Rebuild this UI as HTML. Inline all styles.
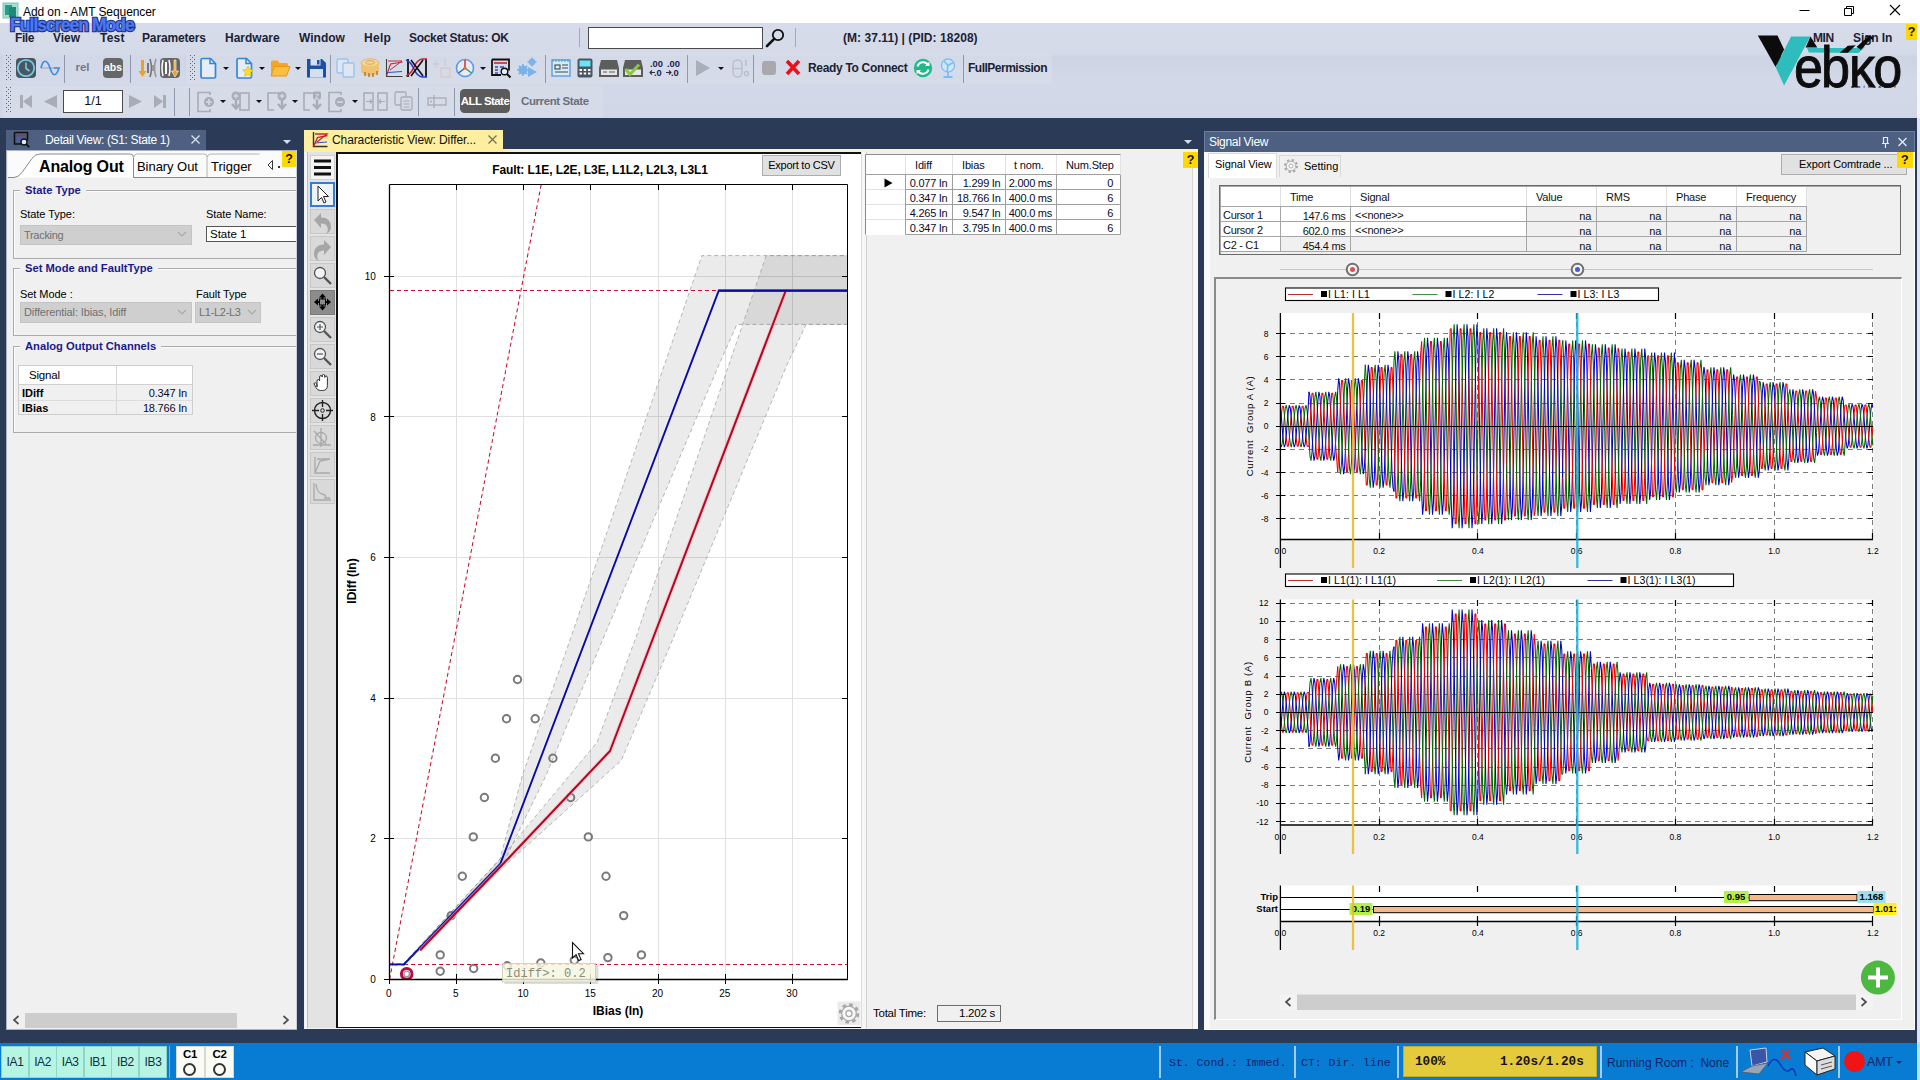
<!DOCTYPE html>
<html lang="en"><head><meta charset="utf-8"><title>Add on - AMT Sequencer</title>
<style>
*{box-sizing:border-box;margin:0;padding:0}
html,body{width:1920px;height:1080px;overflow:hidden;background:#2a3a57;font-family:"Liberation Sans",sans-serif;font-size:11px;color:#000}
.a{position:absolute}
.t{position:absolute;white-space:pre;line-height:1}
.b{font-weight:bold}
.mn{font:bold 12px "Liberation Sans",sans-serif;color:#1b2233;top:31px}
.sep{position:absolute;width:1px;background:#8e99ae}
.grip{position:absolute;width:4px;background-image:linear-gradient(90deg,#8792a8 1px,transparent 1px),linear-gradient(#d4dae8 1px,transparent 1px);background-size:2px 2px,2px 2px;background-blend-mode:normal}
.dd{position:absolute;width:0;height:0;border-left:3px solid transparent;border-right:3px solid transparent;border-top:3px solid #111}
.combo{position:absolute;background:#cfcfcf;border:1px solid #c4c4c4;color:#707070;font-size:11px;line-height:18px;padding-left:3px;white-space:pre}
.grp{position:absolute;border:1px solid #ababab;border-radius:1px;box-shadow:inset 1px 1px 0 #fbfbfb}
.grpt{position:absolute;background:#f0f0f0;color:#1a1a8c;font:bold 11.2px "Liberation Sans",sans-serif;padding:0 5px;white-space:pre;line-height:12px}
.q{position:absolute;background:#ffd800;color:#111;font:bold 12.5px "Liberation Sans",sans-serif;text-align:center;line-height:16px}
.vb{position:absolute;left:310px;width:25px;height:25px;background:#d9d9d9;border:1px solid #c8c8c8}
.cell{position:absolute;font-size:11px;white-space:pre;line-height:14px;color:#0a0a2a}
.sb{position:absolute;top:1046px;height:32px;width:27px;background:#b6f5e4;border:1px solid #8fd6c4;font:12px "Liberation Sans",sans-serif;text-align:center;line-height:31px;color:#10303a}
.st{position:absolute;top:1057px;font:11.5px "Liberation Mono",monospace;color:#14246a;white-space:pre;line-height:12px}
</style></head><body>

<div class="a" style="left:0;top:0;width:1920px;height:23px;background:#fff"></div>
<svg class="a" style="left:2px;top:2px" width="18" height="18" viewBox="0 0 18 18"><rect x="1" y="1" width="15" height="15" fill="#9edfcf" stroke="#7fc6b6"/><rect x="3" y="3" width="7" height="10" fill="#2a9d8a"/><rect x="7" y="5" width="7" height="10" fill="#1f8a78"/></svg>
<div class="t" style="left:23px;top:6px;font-size:12px;letter-spacing:-0.08px;color:#000">Add on - AMT Sequencer</div>
<svg class="a" style="left:1790px;top:0" width="130" height="23" viewBox="0 0 130 23"><path d="M9.5 10.5h10" stroke="#000" stroke-width="1" fill="none"/><path d="M54.5 8.5h7v7h-7zM56.5 8.5v-2h7v7h-2" stroke="#000" stroke-width="1" fill="none"/><path d="M100 5l10 10M110 5l-10 10" stroke="#000" stroke-width="1.1" fill="none"/></svg>
<div class="a" style="left:0;top:23px;width:1917px;height:95px;background:linear-gradient(#d7dcea 0,#d5dae9 30px,#ccd3e3 34px,#d3d9e8 60px,#d0d6e6 95px)"></div>
<div class="a" style="left:3px;top:53px;width:181px;height:31px;background:#d6dbe9;opacity:.55"></div>
<div class="a" style="left:186px;top:53px;width:866px;height:31px;background:#d8ddea;opacity:.6"></div>
<div class="a" style="left:3px;top:86px;width:600px;height:31px;background:#d8ddea;opacity:.6"></div>
<div class="t mn" style="left:15px;letter-spacing:-0.4px">File</div>
<div class="t mn" style="left:53px;letter-spacing:0px">View</div>
<div class="t mn" style="left:100px;letter-spacing:0.2px">Test</div>
<div class="t mn" style="left:142px;letter-spacing:-0.15px">Parameters</div>
<div class="t mn" style="left:225px;letter-spacing:0px">Hardware</div>
<div class="t mn" style="left:299px;letter-spacing:0px">Window</div>
<div class="t mn" style="left:364px;letter-spacing:0.3px">Help</div>
<div class="t mn" style="left:409px;letter-spacing:-0.3px">Socket Status: OK</div>
<div class="t" style="left:10px;top:14.5px;font:bold 17.5px 'Liberation Sans',sans-serif;letter-spacing:-0.95px;color:#3f63e8;-webkit-text-stroke:2.5px #20307a">Fullscreen Mode</div>
<div class="t" style="left:10px;top:14.5px;font:bold 17.5px 'Liberation Sans',sans-serif;letter-spacing:-0.95px;color:#4c78f2;-webkit-text-stroke:0.3px #4c78f2">Fullscreen Mode</div>
<div class="a" style="left:579px;top:28px;width:1px;height:19px;background:#c9a56a"></div>
<div class="a" style="left:588px;top:27px;width:175px;height:22px;background:#fff;border:1px solid #4a4a4a"></div>
<svg class="a" style="left:765px;top:27px" width="22" height="22" viewBox="0 0 22 22"><circle cx="13" cy="8" r="5.2" fill="none" stroke="#111" stroke-width="1.8"/><path d="M9.2 11.8L2 19" stroke="#111" stroke-width="2.6" stroke-linecap="round"/></svg>
<div class="a" style="left:795px;top:28px;width:1px;height:19px;background:#c9a56a"></div>
<div class="t mn" style="left:843px;letter-spacing:0.05px">(M: 37.11) | (PID: 18208)</div>
<div class="q" style="left:1906px;top:24px;width:11px;height:16px">?</div>
<div class="sep" style="left:64px;top:55px;height:28px"></div>
<div class="sep" style="left:130px;top:55px;height:28px"></div>
<div class="sep" style="left:330px;top:55px;height:28px"></div>
<div class="sep" style="left:545px;top:55px;height:28px"></div>
<div class="sep" style="left:687px;top:55px;height:28px"></div>
<div class="sep" style="left:753px;top:55px;height:28px"></div>
<div class="sep" style="left:963px;top:55px;height:28px"></div>
<div class="sep" style="left:174px;top:88px;height:28px"></div>
<div class="sep" style="left:189px;top:88px;height:28px"></div>
<div class="sep" style="left:418px;top:88px;height:28px"></div>
<div class="sep" style="left:454px;top:88px;height:28px"></div>
<div class="dd" style="left:223px;top:67px"></div>
<div class="dd" style="left:259px;top:67px"></div>
<div class="dd" style="left:295px;top:67px"></div>
<div class="dd" style="left:480px;top:67px"></div>
<div class="dd" style="left:718px;top:67px"></div>
<div class="dd" style="left:220px;top:100px"></div>
<div class="dd" style="left:256px;top:100px"></div>
<div class="dd" style="left:292px;top:100px"></div>
<div class="dd" style="left:352px;top:100px"></div>
<svg class="a" style="left:0;top:53px" width="1060" height="65" viewBox="0 53 1060 65" font-family="Liberation Sans, sans-serif">
<defs><pattern id="gp" x="6" y="55" width="4" height="4" patternUnits="userSpaceOnUse"><rect x="0" y="0" width="1" height="1" fill="#5e687c"/><rect x="2" y="2" width="1" height="1" fill="#5e687c"/></pattern></defs>
<rect x="6" y="55" width="5.2" height="26" fill="url(#gp)"/><rect x="190" y="55" width="5.2" height="26" fill="url(#gp)"/><rect x="6" y="87" width="5.2" height="26" fill="url(#gp)"/>
<rect x="16" y="58" width="20" height="20" rx="4" fill="#4a565e"/><circle cx="26" cy="68" r="8.2" fill="none" stroke="#74c8ea" stroke-width="1.8"/><path d="M26 62.5v6l3.5 2.5" stroke="#74c8ea" stroke-width="1.6" fill="none"/>
<path d="M41 68h18" stroke="#9aa3b4" stroke-width="1"/><path d="M41 68c2-9 6-9 9 0s6 9 9 0h-5" fill="none" stroke="#3d8fe2" stroke-width="1.7"/>
<text x="75.5" y="71" font-size="11.5" font-weight="bold" fill="#767b85">rel</text>
<rect x="103" y="58" width="20" height="20" rx="4" fill="#676767"/><text x="113" y="71" font-size="10.5" font-weight="bold" fill="#fff" text-anchor="middle">abs</text>
<path d="M141 60v11h-2.5l4 6 4-6H144V60z" fill="#f0a020"/><path d="M150 59q3 9 0 18" fill="none" stroke="#777" stroke-width="1.6"/><path d="M156 59q-3 9 0 18" fill="none" stroke="#999" stroke-width="1.6"/><rect x="147" y="63" width="2" height="10" fill="#777"/><rect x="152" y="65" width="2" height="6" fill="#999"/>
<rect x="160" y="58" width="20" height="20" rx="4" fill="#676767"/><path d="M163 60q-2 8 0 16M169 60q2 8 0 16" stroke="#fff" stroke-width="1.5" fill="none"/><rect x="165" y="62" width="2" height="12" fill="#fff"/><path d="M174 60v11h-2.5l3.5 6 3.500-6H176V60z" fill="#f0a020" stroke="#fff" stroke-width=".6"/>
<path d="M201 60q0-1.500 1.500-1.500h8l5 5v13q0 1.500-1.500 1.500h-11.500q-1.500 0-1.500-1.500z" fill="#e6edf8" stroke="#2f86e0" stroke-width="1.700"/><path d="M210 58.500v5h5" fill="none" stroke="#2f86e0" stroke-width="1.500"/>
<path d="M237 60q0-1.500 1.500-1.500h8l5 5v13q0 1.500-1.500 1.500h-11.500q-1.500 0-1.500-1.500z" fill="#e6edf8" stroke="#2f86e0" stroke-width="1.700"/><path d="M246 58.500v5h5" fill="none" stroke="#2f86e0" stroke-width="1.500"/><path d="M248 66l1.600 3.400 3.700.5-2.700 2.600.7 3.700-3.300-1.800-3.300 1.800.7-3.700-2.700-2.600 3.700-.5z" fill="#ffe020" stroke="#e0b000" stroke-width=".6"/>
<path d="M271 62q0-1.500 1.500-1.500h5l2 2.500h7q1.500 0 1.500 1.500v2h-13l-4 9z" fill="#f6a623"/><path d="M271 76l3.500-9.500h15.500l-3.500 9.500z" fill="#fbbf3f" stroke="#e8951a" stroke-width="1"/>
<path d="M307 59h15l4 4v14.500h-19z" fill="#1d4fa4"/><rect x="310.500" y="59" width="10" height="6.500" fill="#d4e0f2"/><rect x="317" y="60" width="2.500" height="4.500" fill="#1d4fa4"/><rect x="310" y="69" width="13" height="8.500" fill="#d4e0f2"/>
<rect x="337" y="59" width="11" height="14" rx="1.500" fill="#dfe6f2" stroke="#9cc4ee" stroke-width="1.400"/><rect x="343" y="63" width="11" height="14" rx="1.500" fill="#dfe6f2" stroke="#9cc4ee" stroke-width="1.400"/>
<ellipse cx="370" cy="63" rx="9" ry="4.200" fill="#f3d69a" stroke="#e2b96a"/><path d="M361 63v9q9 8 18 0v-9q-9 7-18 0z" fill="#f0c271"/><ellipse cx="370" cy="62.500" rx="4.500" ry="1.800" fill="none" stroke="#d9a84f" stroke-width="1"/><path d="M365 72v4M369 73v4M373 73v4M377 71v4" stroke="#9a6a20" stroke-width="1.200"/>
<path d="M386.500 59v17.500h16" fill="none" stroke="#404040" stroke-width="1.100"/><path d="M386.500 76l4-12 12-2" fill="none" stroke="#d02030" stroke-width="1.100"/><path d="M388 61h14l-12 9" fill="none" stroke="#c03040" stroke-width="1"/><path d="M388 72.500l14-1" stroke="#3050d0" stroke-width="1.100"/>
<path d="M408 59v18M426 59v18" stroke="#111" stroke-width="1.800"/><path d="M406 76q5-2 8-9t8-8l5 0" fill="none" stroke="#d02030" stroke-width="1.600"/><path d="M406 60q5 2 8 9t8 8l5 0" fill="none" stroke="#2040d0" stroke-width="1.600"/><path d="M411 60q6 8 6 8t6 8M423 60q-6 8-6 8t-6 8" stroke="#111" stroke-width="1.600" fill="none"/>
<g opacity=".45"><rect x="441" y="68" width="9" height="9" fill="none" stroke="#e8b0a0" stroke-width="1.400"/><path d="M436 60v8M433 64h6M445 59v7" stroke="#b8bfd0" stroke-width="1.300"/></g>
<circle cx="465" cy="68" r="8.500" fill="#e6ecf7" stroke="#5a9ae6" stroke-width="1.600"/><path d="M465 68v-8" stroke="#d03030" stroke-width="1.500"/><path d="M465 68l-6.500 5" stroke="#3060d0" stroke-width="1.500"/><path d="M465 68l6.500 5" stroke="#30a060" stroke-width="1.500"/><circle cx="465" cy="68" r="1.600" fill="#e07020"/>
<path d="M492 59.500h17v11M492 59.500v15.500h9" fill="none" stroke="#111" stroke-width="1.800"/><path d="M494 63h13" stroke="#d02030" stroke-width="1.600"/><path d="M495 67h3M495 70h3M495 73h3M500 67h4" stroke="#3050c0" stroke-width="1.300"/><circle cx="504.500" cy="71.500" r="3.300" fill="#e8eef8" stroke="#111" stroke-width="1.400"/><path d="M507 74l3.500 3.500" stroke="#111" stroke-width="2"/>
<g fill="#7ab2ea"><circle cx="523" cy="70" r="4.500"/><circle cx="532" cy="62" r="3.300"/><path d="M528 67l9 5-9 5z"/></g><circle cx="523" cy="70" r="1.800" fill="#d4dae8"/><circle cx="532" cy="62" r="1.300" fill="#d4dae8"/><g stroke="#7ab2ea" stroke-width="1.600"><path d="M523 64v12M517 70h12M518.800 65.800l8.400 8.400M527.200 65.800l-8.400 8.400M532 57.500v9M527.500 62h9"/></g>
<rect x="552" y="60" width="18" height="16" fill="#d6ecfb" stroke="#4e9ae0" stroke-width="1.300"/><path d="M553 59v3M556 59v3M559 59v3M562 59v3M565 59v3M568 59v3" stroke="#4e9ae0" stroke-width="1"/><rect x="555" y="65" width="5" height="4" fill="none" stroke="#444" stroke-width="1.100"/><path d="M562 65h6M562 68h6M555 72h13" stroke="#444" stroke-width="1.200"/>
<rect x="577.500" y="58.500" width="15" height="19" rx="2" fill="#4d5560"/><rect x="579.500" y="60.500" width="11" height="6" fill="#66e6f6"/><g fill="#fff"><rect x="579.500" y="69" width="2.500" height="2"/><rect x="583.700" y="69" width="2.500" height="2"/><rect x="588" y="69" width="2.500" height="2"/><rect x="579.500" y="72.500" width="2.500" height="2"/><rect x="583.700" y="72.500" width="2.500" height="2"/><rect x="588" y="72.500" width="2.500" height="2"/></g>
<path d="M601 60h16l2 8v9h-20v-9z" fill="#5d5d5d"/><rect x="601" y="69.500" width="16" height="5.500" fill="#e6e6e6"/><path d="M603 72h4M609 72h6" stroke="#5d5d5d" stroke-width="1.200"/>
<path d="M625 60h16l2 8v9h-20v-9z" fill="#5d5d5d"/><rect x="625" y="69.500" width="16" height="5.500" fill="#e6e6e6"/><path d="M625.500 69l4.500 5.500 9-10" fill="none" stroke="#8cc63f" stroke-width="3"/>
<text x="650" y="67" font-size="9.300" font-weight="bold" fill="#1b2255">.00</text><text x="667" y="67" font-size="9.300" font-weight="bold" fill="#1b2255">.00</text><text x="654" y="76" font-size="9.300" font-weight="bold" fill="#1b2255">.0</text><text x="671" y="76" font-size="9.300" font-weight="bold" fill="#1b2255">.0</text><path d="M655 72.500h-5m2-2l-2 2 2 2" stroke="#2e3340" stroke-width="1.100" fill="none"/><path d="M666 72.500h5m-2-2l2 2-2 2" stroke="#2e3340" stroke-width="1.100" fill="none"/>
<path d="M696 60l14 8-14 8z" fill="#a9afbb"/>
<g opacity=".55" fill="none" stroke="#a4aab6" stroke-width="1.400"><rect x="733" y="60" width="9" height="17" rx="4.500"/><path d="M733 68.500h9"/><path d="M746 60v6M745 61l1-1"/><circle cx="746.500" cy="73.500" r="2"/></g>
<rect x="762" y="61" width="14" height="14" rx="3" fill="#a9a9ad"/>
<path d="M787 61l12 13M799 61l-12 13" stroke="#e8121a" stroke-width="3.600"/>
<text x="808" y="72" font-size="12" font-weight="bold" fill="#1b2233" letter-spacing="-0.32">Ready To Connect</text>
<circle cx="923" cy="68" r="9.200" fill="#21b98a"/><path d="M917.500 66.500a5.800 5.800 0 0 1 10.500-1.500" fill="none" stroke="#fff" stroke-width="2"/><path d="M929.500 61.500v4.500h-4.500z" fill="#fff"/><path d="M928.500 69.500a5.800 5.800 0 0 1-10.500 1.500" fill="none" stroke="#fff" stroke-width="2"/><path d="M916.500 74.500v-4.500h4.500z" fill="#fff"/>
<circle cx="948" cy="65.500" r="6.500" fill="#cfe6fb" stroke="#7dbdf2" stroke-width="1.300"/><path d="M948 65.500l-4-4.500M948 65.500l5-3M948 65.500l-1 6" stroke="#7dbdf2" stroke-width="1.600"/><path d="M948 72v4M943.500 77h9" stroke="#7dbdf2" stroke-width="1.800"/>
<text x="968" y="72" font-size="12" font-weight="bold" fill="#1b2233" letter-spacing="-0.5">FullPermission</text>
<g fill="#a7acb6"><rect x="20" y="95" width="3" height="13"/><path d="M32 95v13l-9-6.500z"/><path d="M57 95v13l-13-6.500z"/><path d="M129 95v13l13-6.500z"/><path d="M154 95v13l9-6.500z"/><rect x="163" y="95" width="3" height="13"/></g>
<rect x="63.500" y="90.500" width="59" height="22" fill="#fff" stroke="#4a4a4a"/><text x="93" y="105" font-size="12.500" text-anchor="middle" fill="#111">1/1</text>
<path d="M210 95v-2.500h-12v19h12v-2.500" fill="none" stroke="#a7acb6" stroke-width="1.600"/><circle cx="209" cy="102" r="5" fill="#a7acb6"/><path d="M206 102h6M209 99v6" stroke="#d4dae8" stroke-width="1.600"/>
<rect x="240" y="93" width="9" height="17" fill="none" stroke="#a7acb6" stroke-width="1.600"/><circle cx="236" cy="96" r="4.500" fill="#a7acb6"/><path d="M233.500 96h5M236 93.500v5" stroke="#d4dae8" stroke-width="1.400"/><path d="M236 100v7M232 104l4 4.500 4-4.500" stroke="#a7acb6" stroke-width="2.400" fill="none"/>
<path d="M279 93h-11v17h6" fill="none" stroke="#a7acb6" stroke-width="1.600"/><circle cx="282" cy="96" r="4.500" fill="#a7acb6"/><path d="M279.500 96h5M282 93.500v5" stroke="#d4dae8" stroke-width="1.400"/><path d="M282 100v7M278 104l4 4.500 4-4.500" stroke="#a7acb6" stroke-width="2.400" fill="none"/>
<path d="M314 93h-10v17h6" fill="none" stroke="#a7acb6" stroke-width="1.600"/><rect x="313" y="91.500" width="8" height="8" rx="2" fill="#a7acb6"/><text x="317" y="98.500" font-size="7" font-weight="bold" fill="#d4dae8" text-anchor="middle">Z</text><path d="M317 100v7M313 104l4 4.500 4-4.500" stroke="#a7acb6" stroke-width="2.400" fill="none"/>
<path d="M341 95v-2.500h-12v19h12v-2.500" fill="none" stroke="#a7acb6" stroke-width="1.600"/><circle cx="340" cy="102" r="5" fill="#a7acb6"/><path d="M337 102h6" stroke="#d4dae8" stroke-width="1.600"/>
<rect x="364" y="93" width="9" height="17" fill="none" stroke="#a7acb6" stroke-width="1.500"/><rect x="378" y="93" width="9" height="17" fill="none" stroke="#a7acb6" stroke-width="1.500"/><path d="M366 101.500h6m-2-2l2 2-2 2M385 101.500h-6m2-2l-2 2 2 2" stroke="#a7acb6" stroke-width="1.200" fill="none"/>
<rect x="395" y="92" width="11" height="13" rx="1.500" fill="none" stroke="#a7acb6" stroke-width="1.300"/><rect x="401" y="97" width="11" height="13" rx="1.500" fill="#d4dae8" stroke="#a7acb6" stroke-width="1.300"/><path d="M403.500 101h6M403.500 104h6M403.500 107h6" stroke="#a7acb6" stroke-width="1"/>
<rect x="428" y="98" width="18" height="7" fill="none" stroke="#a7acb6" stroke-width="1.300"/><path d="M434 95v13" stroke="#a7acb6" stroke-width="1.300"/><path d="M430 101.500h2" stroke="#a7acb6" stroke-width="1.500"/>
<rect x="460" y="89" width="50" height="24" rx="4.500" fill="#5b5b5b"/><text x="485" y="105" font-size="11.500" font-weight="bold" fill="#fff" text-anchor="middle" letter-spacing="-0.55">ALL State</text>
<text x="521" y="105" font-size="11.500" font-weight="bold" fill="#6a6f7a" letter-spacing="-0.4">Current State</text>
</svg>
<div class="t mn" style="left:1813px;letter-spacing:-0.4px">MIN</div>
<div class="t mn" style="left:1853px;letter-spacing:-0.1px">Sign In</div>
<svg class="a" style="left:1740px;top:23px" width="177" height="95" viewBox="1740 23 177 95" font-family="Liberation Sans, sans-serif">
<defs><clipPath id="kc"><rect x="1840" y="56" width="40" height="40"/></clipPath></defs>
<text x="1766" y="75" font-size="55" font-weight="bold" fill="#0c0c0c">V</text>
<polygon points="1757.8,35.5 1777.5,35.5 1784.1,49.5 1775.6,66.9" fill="#0c0c0c"/>
<polygon points="1791.1,36.4 1810.3,36.4 1784.1,85.6 1775.6,66.9" fill="#2fbcbc"/>
<polygon points="1810.5,36.4 1817.3,47.4 1805.6,47.4" fill="#0c0c0c"/>
<polygon points="1807.0,48.1 1856.2,48.1 1860.9,43.4 1864.7,47.2 1858.6,53.0 1808.9,52.6" fill="#2fbcbc"/>
<polygon points="1839.8,52.8 1847.8,45.8 1855.8,45.3 1847.8,52.8" fill="#0c0c0c"/>
<polygon points="1856.7,46.7 1867.5,36.9 1864.7,35.5 1873.1,36.4 1872.7,40.2 1870.8,38.7 1860.9,50.0" fill="#0c0c0c"/>
<g transform="translate(1794,86.600) scale(0.9,1)" font-size="58" fill="#0d0d0d" stroke="#0d0d0d" stroke-width="0.900">
<text x="0" y="0">e</text><text x="30" y="0">b</text><text x="88" y="0">o</text>
</g>
<g clip-path="url(#kc)"><text transform="translate(1849,86.600) scale(0.9,1)" font-size="58" fill="#0d0d0d" stroke="#0d0d0d" stroke-width="0.900">k</text></g>
<text x="1851" y="88" font-size="4.200" font-weight="bold" fill="#0d0d0d" textLength="45" lengthAdjust="spacing">amirkabir</text>
</svg>
<div class="a" style="left:6px;top:130px;width:200px;height:20px;background:#4d6082"></div>
<svg class="a" style="left:13px;top:131px" width="18" height="18" viewBox="0 0 18 18"><path d="M1.500 1.500h13v8M1.500 1.500v11.500h7" fill="none" stroke="#111" stroke-width="1.600"/><path d="M3 4.500h10" stroke="#d02030" stroke-width="1.300"/><path d="M4 7.500h3M4 10h3M8.500 7.500h3" stroke="#4060d0" stroke-width="1.100"/><circle cx="11" cy="11" r="3" fill="#dfe8f5" stroke="#111" stroke-width="1.300"/><path d="M13.200 13.200l3 3" stroke="#111" stroke-width="1.800"/></svg>
<div class="t" style="left:45px;top:134px;font-size:12px;color:#fff;letter-spacing:-0.35px">Detail View: (S1: State 1)</div>
<svg class="a" style="left:190px;top:134px" width="11" height="11" viewBox="0 0 11 11"><path d="M1.500 1.500l8 8M9.500 1.500l-8 8" stroke="#d5dcec" stroke-width="1.400"/></svg>
<div class="a" style="left:283px;top:140px;width:0;height:0;border-left:4px solid transparent;border-right:4px solid transparent;border-top:4px solid #d5dcec"></div>
<div class="a" style="left:6px;top:150px;width:291px;height:880px;background:#f0f0f0;border:1px solid #aab2c4"></div>
<div class="a" style="left:8px;top:151px;width:288px;height:26px;background:#fbfbfb"></div>
<svg class="a" style="left:8px;top:151px" width="288" height="28" viewBox="8 151 288 28"><path d="M8 177.500h6q4 0 8-5l10-14q3-4.500 8-4.500h90q3.500 0 3.500 3.500v20h163" fill="#fff" stroke="#8a8a8a" stroke-width="1"/><path d="M134 157q0-3 3-3h67q3 0 3 3v20M207.500 157q0-3 3-3h49" fill="none" stroke="#b4b4b4" stroke-width="1"/><path d="M133.500 177.500h163" stroke="#8a8a8a"/><path d="M272.500 160.500v9l-4.500-4.500z" fill="none" stroke="#333" stroke-width="1"/><rect x="278" y="166" width="2" height="2" fill="#333"/></svg>
<div class="t b" style="left:39px;top:158.500px;font-size:16px;letter-spacing:-0.15px">Analog Out</div>
<div class="t" style="left:137px;top:160px;font-size:13px;letter-spacing:-0.05px">Binary Out</div>
<div class="t" style="left:211px;top:160px;font-size:13px;letter-spacing:0">Trigger</div>
<div class="q" style="left:282px;top:151px;width:14px;height:16px">?</div>
<div class="grp" style="left:13px;top:190px;width:290px;height:69px;border-right:none"></div>
<div class="grpt" style="left:20px;top:184px">State Type</div>
<div class="t" style="left:20px;top:209px;font-size:11px;letter-spacing:-0.05px">State Type:</div>
<div class="combo" style="left:20px;top:224.500px;width:172px;height:20px;letter-spacing:-0.3px">Tracking</div>
<svg class="a" style="left:177px;top:231px" width="10" height="7" viewBox="0 0 10 7"><path d="M1 1l4 4 4-4" fill="none" stroke="#a8a8a8" stroke-width="1.100"/></svg>
<div class="t" style="left:206px;top:209px;font-size:11px;letter-spacing:-0.05px">State Name:</div>
<div class="a" style="left:206px;top:225.500px;width:91px;height:16.500px;background:#fff;border:1px solid #555;border-right:none"></div>
<div class="t" style="left:210px;top:228.500px;font-size:11.500px">State 1</div>
<div class="grp" style="left:13px;top:268px;width:290px;height:68px;border-right:none"></div>
<div class="grpt" style="left:20px;top:262px">Set Mode and FaultType</div>
<div class="t" style="left:20px;top:289px;font-size:11px;letter-spacing:-0.05px">Set Mode :</div>
<div class="t" style="left:196px;top:289px;font-size:11px;letter-spacing:-0.05px">Fault Type</div>
<div class="combo" style="left:20px;top:302px;width:172px;height:20.500px;letter-spacing:-0.12px">Differential: Ibias, Idiff</div>
<svg class="a" style="left:177px;top:309px" width="10" height="7" viewBox="0 0 10 7"><path d="M1 1l4 4 4-4" fill="none" stroke="#a8a8a8" stroke-width="1.100"/></svg>
<div class="combo" style="left:195px;top:302px;width:66px;height:20.500px;letter-spacing:-0.3px">L1-L2-L3</div>
<svg class="a" style="left:247px;top:309px" width="10" height="7" viewBox="0 0 10 7"><path d="M1 1l4 4 4-4" fill="none" stroke="#a8a8a8" stroke-width="1.100"/></svg>
<div class="grp" style="left:13px;top:345.700px;width:290px;height:87.500px;border-right:none"></div>
<div class="grpt" style="left:20px;top:339.500px">Analog Output Channels</div>
<div class="a" style="left:18px;top:364.500px;width:175px;height:50px;background:#f0f0f0;border:1px solid #cdcdcd"></div>
<div class="a" style="left:19px;top:365.500px;width:173px;height:19.500px;background:#fff;border-bottom:1px solid #d0d0d0"></div>
<div class="a" style="left:116px;top:365.500px;width:1px;height:48px;background:#d8d8d8"></div>
<div class="a" style="left:19px;top:399.500px;width:173px;height:1px;background:#dcdcdc"></div>
<div class="t" style="left:29px;top:369.500px;font-size:11.500px;letter-spacing:-0.2px">Signal</div>
<div class="t b" style="left:22px;top:388px;font-size:11px">IDiff</div>
<div class="t b" style="left:22px;top:403px;font-size:11px">IBias</div>
<div class="t" style="left:100px;top:388px;width:87px;text-align:right;font-size:11px;color:#0a0a2a;letter-spacing:-0.2px">0.347 In</div>
<div class="t" style="left:100px;top:403px;width:87px;text-align:right;font-size:11px;color:#0a0a2a;letter-spacing:-0.2px">18.766 In</div>
<div class="a" style="left:296px;top:150px;width:1px;height:879px;background:#c9ced9"></div>
<div class="a" style="left:297px;top:150px;width:8px;height:879px;background:#2a3a57"></div>
<div class="a" style="left:8px;top:1013px;width:288px;height:15px;background:#f0f0f0"></div>
<div class="a" style="left:25px;top:1013px;width:212px;height:15px;background:#cdcdcd"></div>
<svg class="a" style="left:8px;top:1012px" width="288" height="16" viewBox="8 1012 288 16"><path d="M18.500 1016l-4.500 4 4.500 4M283.500 1016l4.500 4-4.500 4" fill="none" stroke="#505050" stroke-width="1.700"/></svg>
<div class="a" style="left:303.500px;top:130px;width:199.500px;height:20px;background:#fdef9f"></div>
<svg class="a" style="left:311px;top:131px" width="18" height="18" viewBox="0 0 18 18"><path d="M2.500 1v14.500h14" fill="none" stroke="#303030" stroke-width="1.400"/><path d="M2.500 15.500l4-9 10-2" fill="none" stroke="#d02030" stroke-width="1.400"/><path d="M4 3h12l-10 8" fill="none" stroke="#d02030" stroke-width="1.300"/><path d="M4 12l12-1" stroke="#3050d0" stroke-width="1.200"/></svg>
<div class="t" style="left:332px;top:134px;font-size:12px;color:#111;letter-spacing:-0.1px">Characteristic View: Differ...</div>
<svg class="a" style="left:487px;top:134px" width="11" height="11" viewBox="0 0 11 11"><path d="M1.500 1.500l8 8M9.500 1.500l-8 8" stroke="#7a7350" stroke-width="1.400"/></svg>
<div class="a" style="left:1184px;top:140px;width:0;height:0;border-left:4px solid transparent;border-right:4px solid transparent;border-top:4px solid #d5dcec"></div>
<div class="a" style="left:303.500px;top:149px;width:894.500px;height:3px;background:linear-gradient(90deg,#fdef9f 0,#fdef9f 199px,#f8f3cf 210px,#f8f3cf 100%)"></div>
<div class="a" style="left:303.500px;top:152px;width:894.500px;height:877px;background:#f0f0f0"></div>
<div class="a" style="left:304.500px;top:152px;width:32.500px;height:876px;background:linear-gradient(90deg,#f4f6fa 0,#f4f6fa 2px,#bdbdbd 2.500px,#e3e3e3 3.500px)"></div>
<div class="vb" style="top:155px;background:#f4f4f4;border-color:#d0d0d0"></div>
<div class="vb" style="top:182px;background:#eef3fa;border:2px solid #2f7fd8"></div>
<div class="vb" style="top:209px;"></div>
<div class="vb" style="top:236px;"></div>
<div class="vb" style="top:263px;"></div>
<div class="vb" style="top:290px;background:#8c8c8c;border-color:#7a7a7a"></div>
<div class="vb" style="top:317px;"></div>
<div class="vb" style="top:344px;"></div>
<div class="vb" style="top:371px;"></div>
<div class="vb" style="top:398px;"></div>
<div class="vb" style="top:425px;"></div>
<div class="vb" style="top:452px;"></div>
<div class="vb" style="top:479px;"></div>
<svg class="a" style="left:310px;top:155px" width="26" height="352" viewBox="310 155 26 352">
<path d="M314 161h17M314 167.500h17M314 174h17" stroke="#111" stroke-width="3.200"/>
<path d="M318 186v15l3.500-3.500 2.500 5.500 2-1-2.500-5.500h5z" fill="#fff" stroke="#222" stroke-width="1"/>
<path d="M314 220l7-7v4.500q10 0 10 9.500q0 5-5 7q2.500-3 1.500-6.500q-1-4-6.500-4v4.500z" fill="#a6a6a6"/>
<path d="M331 247l-7-7v4.500q-10 0-10 9.500q0 5 5 7q-2.500-3-1.500-6.500q1-4 6.500-4v4.500z" fill="#a6a6a6"/>
<circle cx="320" cy="273" r="5.500" fill="#eef4f8" stroke="#555" stroke-width="1.300"/><path d="M324 277l7 7" stroke="#555" stroke-width="2.400"/>
<path d="M322.500 293.500l3.500 4h-2.500v3.500h3.500v-2.500l4 3.500-4 3.500v-2.500h-3.500v3.500h2.500l-3.500 4-3.500-4h2.500v-3.500h-3.500v2.500l-4-3.500 4-3.500v2.500h3.500v-3.500h-2.500z" fill="#000"/><rect x="319.500" y="299" width="6" height="6" fill="#8c8c8c" stroke="#000" stroke-width="1"/>
<circle cx="320" cy="327" r="5.500" fill="#eef4f8" stroke="#555" stroke-width="1.300"/><path d="M324 331l7 7" stroke="#555" stroke-width="2.400"/><path d="M317 327h6M320 324v6" stroke="#555" stroke-width="1.200"/>
<circle cx="320" cy="354" r="5.500" fill="#eef4f8" stroke="#555" stroke-width="1.300"/><path d="M324 358l7 7" stroke="#555" stroke-width="2.400"/><path d="M317 354h6" stroke="#555" stroke-width="1.200"/>
<path d="M317 387v-6q0-1.500 1.300-1.500t1.300 1.500v-4q0-1.500 1.300-1.500t1.300 1.500v-1q0-1.500 1.300-1.500t1.300 1.500v1.500q0-1.500 1.300-1.500t1.300 1.500v8q0 5-5 5h-2q-3 0-4.500-3l-2-4q1.500-1.500 3 .5z" fill="#fff" stroke="#333" stroke-width="1"/>
<circle cx="322.500" cy="410.500" r="8" fill="none" stroke="#222" stroke-width="1.400"/><path d="M322.500 400v7M322.500 414v7M312 410.500h7M326 410.500h7" stroke="#222" stroke-width="1.400"/><circle cx="322.500" cy="410.500" r="1.800" fill="none" stroke="#222"/>
<g stroke="#a9a9a9" fill="none" stroke-width="1.300"><circle cx="321" cy="438" r="5.500"/><path d="M321 428v19M313 445h18M314 431l12 13"/></g>
<g stroke="#a9a9a9" fill="none" stroke-width="1.300"><path d="M315 457v16h15M315 473l5-12 10-2M317 459h12"/></g>
<g stroke="#a9a9a9" fill="none" stroke-width="1.300"><path d="M314 483v17h17M316 484q1 9 6 10t3 4h5"/></g>
</svg>
<div class="a" style="left:336px;top:152px;width:525px;height:876px;background:#fff;border-left:2px solid #111;border-top:2px solid #111;border-bottom:1px solid #111"></div>
<div class="a" style="left:861px;top:152px;width:5px;height:876px;background:#f6f6f6;border-left:1px solid #dcdcdc"></div>
<div class="a" style="left:762px;top:155px;width:79px;height:21px;background:#e1e1e1;border:1px solid #adadad;font-size:11px;text-align:center;line-height:19px;letter-spacing:-0.25px">Export to CSV</div>
<svg class="a" style="left:339px;top:154px" width="522" height="874" viewBox="339 154 522 874" font-family="Liberation Sans, sans-serif">
<defs><clipPath id="pc"><rect x="389.600" y="185" width="458" height="794.300"/></clipPath></defs>
<path d="M456.5 185V979 M523.5 185V979 M590.5 185V979 M658.5 185V979 M725.5 185V979 M792.5 185V979 M390 838.5H847 M390 698.5H847 M390 557.5H847 M390 416.5H847 M390 276.5H847" stroke="#e0e0e0" stroke-width="1" fill="none" shape-rendering="crispEdges"/>
<g clip-path="url(#pc)">
<polygon points="389.6,963.5 403.5,963.5 500.0,859.0 522.5,775.0 570.0,640.0 664.4,365.0 701.9,255.6 848.0,255.6 848.0,324.4 736.9,324.4 718.8,365.0 602.5,640.0 546.2,775.0 501.0,868.0 404.0,965.5 389.6,965.5" fill="#000" fill-opacity="0.08" stroke="#9a9a9a" stroke-opacity=".7" stroke-width="1" stroke-dasharray="4 3"/>
<polygon points="404.0,963.5 500.0,859.0 596.9,742.5 635.0,640.0 728.8,365.0 766.2,255.6 848.0,255.6 848.0,324.4 806.2,324.4 786.9,365.0 672.5,640.0 621.2,760.6 501.0,869.0 404.0,965.5" fill="#000" fill-opacity="0.08" stroke="#9a9a9a" stroke-opacity=".7" stroke-width="1" stroke-dasharray="4 3"/>
<g fill="none" stroke="#7a7a7a" stroke-width="2"><circle cx="440.2" cy="971.2" r="3.700"/><circle cx="473.7" cy="968.5" r="3.700"/><circle cx="507.3" cy="965.8" r="3.700"/><circle cx="540.8" cy="963.0" r="3.700"/><circle cx="574.3" cy="960.3" r="3.700"/><circle cx="607.9" cy="957.6" r="3.700"/><circle cx="641.4" cy="954.9" r="3.700"/><circle cx="623.7" cy="915.6" r="3.700"/><circle cx="606.0" cy="876.2" r="3.700"/><circle cx="588.3" cy="836.9" r="3.700"/><circle cx="570.6" cy="797.5" r="3.700"/><circle cx="552.9" cy="758.2" r="3.700"/><circle cx="535.2" cy="718.8" r="3.700"/><circle cx="517.5" cy="679.5" r="3.700"/><circle cx="506.5" cy="718.8" r="3.700"/><circle cx="495.4" cy="758.2" r="3.700"/><circle cx="484.4" cy="797.5" r="3.700"/><circle cx="473.3" cy="836.9" r="3.700"/><circle cx="462.3" cy="876.2" r="3.700"/><circle cx="451.2" cy="915.6" r="3.700"/><circle cx="440.2" cy="954.9" r="3.700"/></g>
<circle cx="406.7" cy="973.9" r="5.300" fill="none" stroke="#b0104a" stroke-width="3"/><circle cx="406.7" cy="973.9" r="2.800" fill="none" stroke="#a89098" stroke-width="1.400"/>
<path d="M390 290.500H719M404 964.500H848M389.600 979.300L541.1 184.9" stroke="#c8102e" stroke-width="1.050" stroke-dasharray="4 3" fill="none"/>
<path d="M389.600 964.400H403.850L500.300 863.900L718.750 290.600H848" fill="none" stroke="#0a0aa8" stroke-width="1.900" stroke-linejoin="round"/>
<path d="M420.200 950.300L501.800 865.300L610 751L785.600 291" fill="none" stroke="#ffb0c0" stroke-width="4" stroke-opacity=".6" stroke-linejoin="round"/>
<path d="M420.200 950.300L501.800 865.300L610 751L785.600 291" fill="none" stroke="#b00820" stroke-width="2" stroke-linejoin="round"/>
<path d="M718 290.600H848" fill="none" stroke="#0a0aa8" stroke-width="2.200"/>
</g>
<path d="M389.500 184.500V979.500H848" fill="none" stroke="#000" stroke-width="1.300"/><path d="M389.500 184.500H847.500V979.500" fill="none" stroke="#000" stroke-width="1"/>
<path d="M456.5 185v5M456.5 979v-5 M523.5 185v5M523.5 979v-5 M590.5 185v5M590.5 979v-5 M658.5 185v5M658.5 979v-5 M725.5 185v5M725.5 979v-5 M792.5 185v5M792.5 979v-5 M389.5 979v5 M456.5 979v5 M523.5 979v5 M590.5 979v5 M658.5 979v5 M725.5 979v5 M792.5 979v5 M384 979.5h10M847 979.5h-5 M384 838.5h10M847 838.5h-5 M384 698.5h10M847 698.5h-5 M384 557.5h10M847 557.5h-5 M384 416.5h10M847 416.5h-5 M384 276.5h10M847 276.5h-5" stroke="#000" stroke-width="1.200" fill="none" shape-rendering="crispEdges"/>
<text x="388.7" y="996.800" font-size="10" text-anchor="middle">0</text>
<text x="455.9" y="996.800" font-size="10" text-anchor="middle">5</text>
<text x="523.1" y="996.800" font-size="10" text-anchor="middle">10</text>
<text x="590.3" y="996.800" font-size="10" text-anchor="middle">15</text>
<text x="657.5" y="996.800" font-size="10" text-anchor="middle">20</text>
<text x="724.7" y="996.800" font-size="10" text-anchor="middle">25</text>
<text x="791.9" y="996.800" font-size="10" text-anchor="middle">30</text>
<text x="375.800" y="982.9" font-size="10" text-anchor="end">0</text>
<text x="375.800" y="842.3" font-size="10" text-anchor="end">2</text>
<text x="375.800" y="701.7" font-size="10" text-anchor="end">4</text>
<text x="375.800" y="561.1" font-size="10" text-anchor="end">6</text>
<text x="375.800" y="420.5" font-size="10" text-anchor="end">8</text>
<text x="375.800" y="279.9" font-size="10" text-anchor="end">10</text>
<text x="600" y="173.500" font-size="12" font-weight="bold" text-anchor="middle" letter-spacing="-0.1">Fault: L1E, L2E, L3E, L1L2, L2L3, L3L1</text>
<text x="618" y="1014.500" font-size="12" font-weight="bold" text-anchor="middle">IBias (In)</text>
<text transform="translate(356,581) rotate(-90)" font-size="12" font-weight="bold" text-anchor="middle">IDiff (In)</text>
<rect x="504.500" y="965.500" width="94" height="18.500" fill="#000" fill-opacity=".13"/><rect x="502.500" y="963.500" width="93" height="18.500" fill="#fdfde6" fill-opacity=".8" stroke="#c8c8b4" stroke-opacity=".8"/><text x="506" y="977" font-family="Liberation Mono, monospace" font-size="12.100" fill="#8c8c7c" letter-spacing="0">Idiff&gt;: 0.2</text>
<path d="M572.500 942.500v15.500l3.600-3.400 2.600 6 2.400-1-2.600-5.900h5z" fill="#fff" stroke="#111" stroke-width="1.100"/>
<g transform="translate(849,1013.500)"><rect x="-11.500" y="-12" width="23" height="23.500" fill="#ebebeb"/><circle r="8.800" fill="none" stroke="#a6a6a6" stroke-width="3" stroke-dasharray="3.455 3.455"/><circle r="7.300" fill="#f6f6f6" stroke="#a6a6a6" stroke-width="1.200"/><circle r="3" fill="#fff" stroke="#a6a6a6" stroke-width="1.300"/></g>
</svg>
<div class="a" style="left:866px;top:152px;width:326px;height:876px;background:#f0f0f0;border-left:1px solid #cfcfcf"></div>
<div class="a" style="left:1192px;top:152px;width:6px;height:877px;background:#f7f7f7;border-left:1px solid #d4d4d4"></div>
<div class="a" style="left:865.500px;top:154.500px;width:255px;height:80px;background:#fff"></div>
<svg class="a" style="left:865px;top:154px" width="257" height="82" viewBox="865 154 257 82">
<path d="M865.500 154.500H1120.500M865.500 154.500V234.500" stroke="#8c8c8c" fill="none"/>
<path d="M865.500 174.500H1120.500" stroke="#a0a0a0" fill="none"/>
<path d="M866 189.500H905M866 204.500H905M866 219.500H905M905.500 155V174M952.500 155V174M1005.500 155V174M1056.500 155V174M1120.500 155V174" stroke="#e2e2e2" fill="none"/>
<path d="M905.500 175V234.500M952.500 175V234.500M1005.500 175V234.500M1056.500 175V234.500M1120.500 175V234.500M905.500 189.500H1120.500M905.500 204.500H1120.500M905.500 219.500H1120.500M905.500 234.500H1120.500" stroke="#9e9e9e" fill="none"/>
<path d="M884.500 178.500l8 4.500-8 4.500z" fill="#000"/>
</svg>
<div class="cell" style="left:915px;top:158px;letter-spacing:-0.15px">Idiff</div>
<div class="cell" style="left:962px;top:158px;letter-spacing:-0.15px">Ibias</div>
<div class="cell" style="left:1014px;top:158px;letter-spacing:-0.15px">t nom.</div>
<div class="cell" style="left:1066px;top:158px;letter-spacing:-0.15px">Num.Step</div>
<div class="cell" style="left:906px;top:176px;width:41.5px;text-align:right;letter-spacing:-0.25px">0.077 In</div>
<div class="cell" style="left:953px;top:176px;width:47.5px;text-align:right;letter-spacing:-0.25px">1.299 In</div>
<div class="cell" style="left:1006px;top:176px;width:46px;text-align:right;letter-spacing:-0.25px">2.000 ms</div>
<div class="cell" style="left:1057px;top:176px;width:56px;text-align:right;letter-spacing:-0.25px">0</div>
<div class="cell" style="left:906px;top:191px;width:41.5px;text-align:right;letter-spacing:-0.25px">0.347 In</div>
<div class="cell" style="left:953px;top:191px;width:47.5px;text-align:right;letter-spacing:-0.25px">18.766 In</div>
<div class="cell" style="left:1006px;top:191px;width:46px;text-align:right;letter-spacing:-0.25px">400.0 ms</div>
<div class="cell" style="left:1057px;top:191px;width:56px;text-align:right;letter-spacing:-0.25px">6</div>
<div class="cell" style="left:906px;top:206px;width:41.5px;text-align:right;letter-spacing:-0.25px">4.265 In</div>
<div class="cell" style="left:953px;top:206px;width:47.5px;text-align:right;letter-spacing:-0.25px">9.547 In</div>
<div class="cell" style="left:1006px;top:206px;width:46px;text-align:right;letter-spacing:-0.25px">400.0 ms</div>
<div class="cell" style="left:1057px;top:206px;width:56px;text-align:right;letter-spacing:-0.25px">6</div>
<div class="cell" style="left:906px;top:221px;width:41.5px;text-align:right;letter-spacing:-0.25px">0.347 In</div>
<div class="cell" style="left:953px;top:221px;width:47.5px;text-align:right;letter-spacing:-0.25px">3.795 In</div>
<div class="cell" style="left:1006px;top:221px;width:46px;text-align:right;letter-spacing:-0.25px">400.0 ms</div>
<div class="cell" style="left:1057px;top:221px;width:56px;text-align:right;letter-spacing:-0.25px">6</div>
<div class="q" style="left:1183px;top:152px;width:15px;height:16px">?</div>
<div class="t" style="left:873px;top:1008px;font-size:11.500px;letter-spacing:-0.25px">Total Time:</div>
<div class="a" style="left:937px;top:1005px;width:64px;height:17px;border:1px solid #6e6e6e;background:#f0f0f0;font-size:11.500px;text-align:right;padding-right:5px;line-height:15px;letter-spacing:-0.25px">1.202 s</div>
<div class="a" style="left:1204px;top:130.500px;width:710.500px;height:21.500px;background:#4d6082;border:1px solid #6a7fa6;border-bottom:none"></div>
<div class="t" style="left:1209px;top:136px;font-size:12px;color:#fff;letter-spacing:-0.3px">Signal View</div>
<svg class="a" style="left:1880px;top:134px" width="32" height="16" viewBox="1880 134 32 16"><path d="M1883.500 137.500h4v6h-4zM1882 143.500h7M1885.500 143.500v4.500" fill="none" stroke="#e6ebf5" stroke-width="1.200"/><path d="M1898.500 138l8 8M1906.500 138l-8 8" stroke="#e6ebf5" stroke-width="1.300"/></svg>
<div class="a" style="left:1204px;top:152px;width:710.500px;height:878px;background:#f0f0f0;border:1px solid #fff;border-top:none;border-left:6px solid #f9fafd"></div>
<div class="a" style="left:1208px;top:153px;width:69px;height:25px;background:#fff;border:1px solid #d9d9d9;border-bottom:none"></div>
<div class="t" style="left:1215px;top:159px;font-size:11px;letter-spacing:-0.05px">Signal View</div>
<div class="a" style="left:1279px;top:155px;width:62px;height:22px;background:#f0f0f0;border:1px solid #d9d9d9;border-bottom:none"></div>
<svg class="a" style="left:1282px;top:157px" width="18" height="18" viewBox="-9 -9 18 18"><circle r="6" fill="none" stroke="#a8a8a8" stroke-width="2.200" stroke-dasharray="2.300 2.400"/><circle r="4.800" fill="#f4f4f4" stroke="#b0b0b0" stroke-width="1"/><circle r="2" fill="#fff" stroke="#b0b0b0" stroke-width="1"/></svg>
<div class="t" style="left:1304px;top:160.500px;font-size:11px;letter-spacing:0">Setting</div>
<div class="a" style="left:1781px;top:154px;width:126px;height:21px;background:#e1e1e1;border:1px solid #adadad;font-size:11px;line-height:19px;padding-left:17px;letter-spacing:-0.1px;white-space:pre">Export Comtrade ...</div>
<div class="q" style="left:1896.500px;top:151.500px;width:16.500px;height:16px">?</div>
<div class="a" style="left:1219px;top:185px;width:682px;height:70px;background:#f0f0f0;border:1px solid #696969;box-shadow:inset 1px 1px 0 #a8a8a8"></div>
<div class="a" style="left:1221px;top:187px;width:585.500px;height:19px;background:#fff"></div>
<div class="a" style="left:1281px;top:206px;width:245px;height:30px;background:#fff"></div>
<div class="a" style="left:1221px;top:206px;width:59.500px;height:45.500px;background:#fff"></div>
<svg class="a" style="left:1220px;top:186px" width="590" height="68" viewBox="1220 186 590 68">
<path d="M1280.500 187V206M1350.500 187V206M1526.500 187V206M1596.500 187V206M1666.500 187V206M1736.500 187V206M1806.500 187V206" stroke="#e0e0e0" fill="none"/>
<path d="M1221 206.500H1806.500M1221 221.500H1806.500M1221 236.500H1806.500M1221 251.500H1806.500M1280.500 206V251.500M1350.500 206V251.500M1526.500 206V251.500M1596.500 206V251.500M1666.500 206V251.500M1736.500 206V251.500M1806.500 206V251.500" stroke="#a6a6a6" fill="none"/>
</svg>
<div class="cell" style="left:1290px;top:190px;letter-spacing:-0.2px;color:#111">Time</div>
<div class="cell" style="left:1360px;top:190px;letter-spacing:-0.2px;color:#111">Signal</div>
<div class="cell" style="left:1536px;top:190px;letter-spacing:-0.2px;color:#111">Value</div>
<div class="cell" style="left:1606px;top:190px;letter-spacing:-0.2px;color:#111">RMS</div>
<div class="cell" style="left:1676px;top:190px;letter-spacing:-0.2px;color:#111">Phase</div>
<div class="cell" style="left:1746px;top:190px;letter-spacing:-0.2px;color:#111">Frequency</div>
<div class="cell" style="left:1223px;top:208px;letter-spacing:-0.3px;color:#111">Cursor 1</div>
<div class="cell" style="left:1285px;top:209px;width:60.500px;text-align:right;letter-spacing:-0.3px;color:#111">147.6 ms</div>
<div class="cell" style="left:1355px;top:208px;letter-spacing:-0.2px;color:#111">&lt;&lt;none&gt;&gt;</div>
<div class="cell" style="left:1561.5px;top:209px;width:30px;text-align:right;color:#111">na</div>
<div class="cell" style="left:1631.5px;top:209px;width:30px;text-align:right;color:#111">na</div>
<div class="cell" style="left:1701.5px;top:209px;width:30px;text-align:right;color:#111">na</div>
<div class="cell" style="left:1771.5px;top:209px;width:30px;text-align:right;color:#111">na</div>
<div class="cell" style="left:1223px;top:223px;letter-spacing:-0.3px;color:#111">Cursor 2</div>
<div class="cell" style="left:1285px;top:224px;width:60.500px;text-align:right;letter-spacing:-0.3px;color:#111">602.0 ms</div>
<div class="cell" style="left:1355px;top:223px;letter-spacing:-0.2px;color:#111">&lt;&lt;none&gt;&gt;</div>
<div class="cell" style="left:1561.5px;top:224px;width:30px;text-align:right;color:#111">na</div>
<div class="cell" style="left:1631.5px;top:224px;width:30px;text-align:right;color:#111">na</div>
<div class="cell" style="left:1701.5px;top:224px;width:30px;text-align:right;color:#111">na</div>
<div class="cell" style="left:1771.5px;top:224px;width:30px;text-align:right;color:#111">na</div>
<div class="cell" style="left:1223px;top:238px;letter-spacing:-0.3px;color:#111">C2 - C1</div>
<div class="cell" style="left:1285px;top:239px;width:60.500px;text-align:right;letter-spacing:-0.3px;color:#111">454.4 ms</div>
<div class="cell" style="left:1561.5px;top:239px;width:30px;text-align:right;color:#111">na</div>
<div class="cell" style="left:1631.5px;top:239px;width:30px;text-align:right;color:#111">na</div>
<div class="cell" style="left:1701.5px;top:239px;width:30px;text-align:right;color:#111">na</div>
<div class="cell" style="left:1771.5px;top:239px;width:30px;text-align:right;color:#111">na</div>
<svg class="a" style="left:1270px;top:260px" width="620" height="20" viewBox="1270 260 620 20"><path d="M1280 269.500H1873" stroke="#c8c8c8"/><circle cx="1352.500" cy="269.500" r="5.800" fill="#f4f4f4" stroke="#707070" stroke-width="2"/><circle cx="1352.500" cy="269.500" r="2.500" fill="#e84a5a"/><circle cx="1577.500" cy="269.500" r="5.800" fill="#f4f4f4" stroke="#707070" stroke-width="2"/><circle cx="1577.500" cy="269.500" r="2.500" fill="#4a5ae0"/></svg>
<div class="a" style="left:1214px;top:277px;width:688px;height:743px;border:2px solid #8a8a8a;border-right:1px solid #fff;border-bottom:1px solid #fff;background:#f0f0f0"></div>
<svg class="a" style="left:1216px;top:279px" width="700" height="740" viewBox="1216 279 700 740" font-family="Liberation Sans, sans-serif">
<rect x="1280.400" y="313" width="593" height="226.500" fill="#fff"/>
<path d="M1281 518.5H1873 M1281 495.5H1873 M1281 472.5H1873 M1281 449.5H1873 M1281 403.5H1873 M1281 379.5H1873 M1281 356.5H1873 M1281 333.5H1873 M1379.5 313V539 M1477.5 313V539 M1576.5 313V539 M1675.5 313V539 M1774.5 313V539 M1872.5 313V539" stroke="#7c7c7c" stroke-width="1" stroke-dasharray="5 4" fill="none"/>
<g fill="none" stroke-width="1.050" stroke-linejoin="bevel">
<polyline points="1280.4,426.2 1281.4,413.9 1282.4,406.3 1283.4,406.3 1284.3,413.9 1285.3,426.2 1286.3,438.5 1287.3,446.1 1288.3,446.1 1289.3,438.5 1290.3,426.2 1291.3,413.9 1292.2,406.3 1293.2,406.3 1294.2,413.9 1295.2,426.2 1296.2,438.5 1297.2,446.1 1298.2,446.1 1299.2,438.5 1300.1,426.2 1301.1,413.9 1302.1,406.3 1303.1,406.3 1304.1,413.9 1305.1,426.2 1306.1,438.5 1307.1,446.1 1308.0,446.1 1309.0,446.5" stroke="#f00000"/>
<polyline points="1280.4,444.4 1281.4,447.1 1282.4,441.8 1283.4,430.6 1284.3,417.7 1285.3,408.0 1286.3,405.3 1287.3,410.6 1288.3,421.8 1289.3,434.7 1290.3,444.4 1291.3,447.1 1292.2,441.8 1293.2,430.6 1294.2,417.7 1295.2,408.0 1296.2,405.3 1297.2,410.6 1298.2,421.8 1299.2,434.7 1300.1,444.4 1301.1,447.1 1302.1,441.8 1303.1,430.6 1304.1,417.7 1305.1,408.0 1306.1,405.3 1307.1,410.6 1308.0,421.8 1309.0,440.3" stroke="#006a00"/>
<polyline points="1280.4,408.0 1281.4,417.7 1282.4,430.6 1283.4,441.8 1284.3,447.1 1285.3,444.4 1286.3,434.7 1287.3,421.8 1288.3,410.6 1289.3,405.3 1290.3,408.0 1291.3,417.7 1292.2,430.6 1293.2,441.8 1294.2,447.1 1295.2,444.4 1296.2,434.7 1297.2,421.8 1298.2,410.6 1299.2,405.3 1300.1,408.0 1301.1,417.7 1302.1,430.6 1303.1,441.8 1304.1,447.1 1305.1,444.4 1306.1,434.7 1307.1,421.8 1308.0,410.6 1309.0,391.8" stroke="#0000c8"/>
<polyline points="1309.0,440.3 1310.0,456.1 1311.0,460.6 1312.0,451.9 1313.0,433.4 1314.0,412.1 1315.0,396.3 1315.9,391.8 1316.9,400.5 1317.9,419.0 1318.9,440.3 1319.9,456.1 1320.9,460.6 1321.9,451.9 1322.9,433.4 1323.8,412.1 1324.8,396.3 1325.8,391.8 1326.8,400.5 1327.8,419.0 1328.8,440.3 1329.8,456.1 1330.8,460.6 1331.7,451.9 1332.7,433.4 1333.7,412.1 1334.7,396.3 1335.7,391.8 1336.7,400.5 1337.7,416.2" stroke="#006a00"/>
<polyline points="1309.0,391.8 1310.0,396.3 1311.0,412.1 1312.0,433.4 1313.0,451.9 1314.0,460.6 1315.0,456.1 1315.9,440.3 1316.9,419.0 1317.9,400.5 1318.9,391.8 1319.9,396.3 1320.9,412.1 1321.9,433.4 1322.9,451.9 1323.8,460.6 1324.8,456.1 1325.8,440.3 1326.8,419.0 1327.8,400.5 1328.8,391.8 1329.8,396.3 1330.8,412.1 1331.7,433.4 1332.7,451.9 1333.7,460.6 1334.7,456.1 1335.7,440.3 1336.7,419.0 1337.7,390.4" stroke="#0000c8"/>
<polyline points="1309.0,446.5 1310.0,426.2 1311.0,405.9 1312.0,393.3 1313.0,393.3 1314.0,405.9 1315.0,426.2 1315.9,446.5 1316.9,459.1 1317.9,459.1 1318.9,446.5 1319.9,426.2 1320.9,405.9 1321.9,393.3 1322.9,393.3 1323.8,405.9 1324.8,426.2 1325.8,446.5 1326.8,459.1 1327.8,459.1 1328.8,446.5 1329.8,426.2 1330.8,405.9 1331.7,393.3 1332.7,393.3 1333.7,405.9 1334.7,426.2 1335.7,446.5 1336.7,459.1 1337.7,472.0" stroke="#f00000"/>
<polyline points="1337.7,390.4 1338.7,378.3 1339.6,384.5 1340.6,406.6 1341.6,436.2 1342.6,462.0 1343.6,474.1 1344.6,467.9 1345.6,445.8 1346.6,416.2 1347.5,390.4 1348.5,378.3 1349.5,384.5 1350.5,406.6 1351.5,436.2 1352.5,462.0 1353.5,474.1 1354.5,467.9 1355.4,445.8 1356.4,416.2 1357.4,390.4 1358.4,378.3 1359.4,384.5 1360.4,406.6 1361.4,436.2 1362.4,462.0 1363.3,474.1 1364.3,467.9 1365.3,451.3" stroke="#0000c8"/>
<polyline points="1337.7,472.0 1338.7,454.5 1339.6,426.2 1340.6,397.9 1341.6,380.4 1342.6,380.4 1343.6,397.9 1344.6,426.2 1345.6,454.5 1346.6,472.0 1347.5,472.0 1348.5,454.5 1349.5,426.2 1350.5,397.9 1351.5,380.4 1352.5,380.4 1353.5,397.9 1354.5,426.2 1355.4,454.5 1356.4,472.0 1357.4,472.0 1358.4,454.5 1359.4,426.2 1360.4,397.9 1361.4,380.4 1362.4,380.4 1363.3,397.9 1364.3,426.2 1365.3,462.5" stroke="#f00000"/>
<polyline points="1337.7,416.2 1338.7,445.8 1339.6,467.9 1340.6,474.1 1341.6,462.0 1342.6,436.2 1343.6,406.6 1344.6,384.5 1345.6,378.3 1346.6,390.4 1347.5,416.2 1348.5,445.8 1349.5,467.9 1350.5,474.1 1351.5,462.0 1352.5,436.2 1353.5,406.6 1354.5,384.5 1355.4,378.3 1356.4,390.4 1357.4,416.2 1358.4,445.8 1359.4,467.9 1360.4,474.1 1361.4,462.0 1362.4,436.2 1363.3,406.6 1364.3,384.5 1365.3,364.8" stroke="#006a00"/>
<polyline points="1365.3,462.5 1366.3,484.9 1367.3,484.9 1368.3,462.5 1369.3,426.2 1370.3,389.9 1371.2,367.5 1372.2,367.5 1373.2,389.9 1374.2,426.2 1375.2,462.5 1376.2,484.9 1377.2,484.9 1378.2,462.5 1379.1,426.2 1380.1,389.9 1381.1,367.5 1382.1,367.5 1383.1,389.9 1384.1,426.2 1385.1,462.5 1386.1,484.9 1387.0,484.9 1388.0,462.5 1389.0,426.2 1390.0,389.9 1391.0,367.5 1392.0,367.5 1393.0,389.9 1394.0,426.2" stroke="#f00000"/>
<polyline points="1365.3,364.8 1366.3,380.3 1367.3,413.4 1368.3,451.3 1369.3,479.7 1370.3,487.6 1371.2,472.1 1372.2,439.0 1373.2,401.1 1374.2,372.7 1375.2,364.8 1376.2,380.3 1377.2,413.4 1378.2,451.3 1379.1,479.7 1380.1,487.6 1381.1,472.1 1382.1,439.0 1383.1,401.1 1384.1,372.7 1385.1,364.8 1386.1,380.3 1387.0,413.4 1388.0,451.3 1389.0,479.7 1390.0,487.6 1391.0,472.1 1392.0,439.0 1393.0,401.1 1394.0,360.9" stroke="#006a00"/>
<polyline points="1365.3,451.3 1366.3,413.4 1367.3,380.3 1368.3,364.8 1369.3,372.7 1370.3,401.1 1371.2,439.0 1372.2,472.1 1373.2,487.6 1374.2,479.7 1375.2,451.3 1376.2,413.4 1377.2,380.3 1378.2,364.8 1379.1,372.7 1380.1,401.1 1381.1,439.0 1382.1,472.1 1383.1,487.6 1384.1,479.7 1385.1,451.3 1386.1,413.4 1387.0,380.3 1388.0,364.8 1389.0,372.7 1390.0,401.1 1391.0,439.0 1392.0,472.1 1393.0,487.6 1394.0,491.5" stroke="#0000c8"/>
<polyline points="1394.0,360.9 1394.9,351.3 1395.9,370.2 1396.9,410.5 1397.9,456.8 1398.9,491.5 1399.9,501.1 1400.9,482.2 1401.9,441.9 1402.8,395.6 1403.8,360.9 1404.8,351.3 1405.8,370.2 1406.8,410.5 1407.8,456.8 1408.8,491.5 1409.7,501.1 1410.7,482.2 1411.7,441.9 1412.7,395.6 1413.7,360.9 1414.7,351.3 1415.7,370.2 1416.7,410.5 1417.6,456.8 1418.6,491.5 1419.6,501.1 1420.6,482.2 1421.6,444.7" stroke="#006a00"/>
<polyline points="1394.0,491.5 1394.9,456.8 1395.9,410.5 1396.9,370.2 1397.9,351.3 1398.9,360.9 1399.9,395.6 1400.9,441.9 1401.9,482.2 1402.8,501.1 1403.8,491.5 1404.8,456.8 1405.8,410.5 1406.8,370.2 1407.8,351.3 1408.8,360.9 1409.7,395.6 1410.7,441.9 1411.7,482.2 1412.7,501.1 1413.7,491.5 1414.7,456.8 1415.7,410.5 1416.7,370.2 1417.6,351.3 1418.6,360.9 1419.6,395.6 1420.6,441.9 1421.6,492.3" stroke="#0000c8"/>
<polyline points="1394.0,426.2 1394.9,470.5 1395.9,497.9 1396.9,497.9 1397.9,470.5 1398.9,426.2 1399.9,381.9 1400.9,354.5 1401.9,354.5 1402.8,381.9 1403.8,426.2 1404.8,470.5 1405.8,497.9 1406.8,497.9 1407.8,470.5 1408.8,426.2 1409.7,381.9 1410.7,354.5 1411.7,354.5 1412.7,381.9 1413.7,426.2 1414.7,470.5 1415.7,497.9 1416.7,497.9 1417.6,470.5 1418.6,426.2 1419.6,381.9 1420.6,354.5 1421.6,341.6" stroke="#f00000"/>
<polyline points="1421.6,492.3 1422.6,514.7 1423.6,503.2 1424.6,462.4 1425.5,407.7 1426.5,360.1 1427.5,337.7 1428.5,349.2 1429.5,390.0 1430.5,444.7 1431.5,492.3 1432.5,514.7 1433.4,503.2 1434.4,462.4 1435.4,407.7 1436.4,360.1 1437.4,337.7 1438.4,349.2 1439.4,390.0 1440.4,444.7 1441.3,492.3 1442.3,514.7 1443.3,503.2 1444.3,462.4 1445.3,407.7 1446.3,360.1 1447.3,337.7 1448.3,349.2 1449.2,390.0 1450.2,447.5" stroke="#0000c8"/>
<polyline points="1421.6,341.6 1422.6,373.9 1423.6,426.2 1424.6,478.5 1425.5,510.8 1426.5,510.8 1427.5,478.5 1428.5,426.2 1429.5,373.9 1430.5,341.6 1431.5,341.6 1432.5,373.9 1433.4,426.2 1434.4,478.5 1435.4,510.8 1436.4,510.8 1437.4,478.5 1438.4,426.2 1439.4,373.9 1440.4,341.6 1441.3,341.6 1442.3,373.9 1443.3,426.2 1444.3,478.5 1445.3,510.8 1446.3,510.8 1447.3,478.5 1448.3,426.2 1449.2,373.9 1450.2,328.7" stroke="#f00000"/>
<polyline points="1421.6,444.7 1422.6,390.0 1423.6,349.2 1424.6,337.7 1425.5,360.1 1426.5,407.7 1427.5,462.4 1428.5,503.2 1429.5,514.7 1430.5,492.3 1431.5,444.7 1432.5,390.0 1433.4,349.2 1434.4,337.7 1435.4,360.1 1436.4,407.7 1437.4,462.4 1438.4,503.2 1439.4,514.7 1440.4,492.3 1441.3,444.7 1442.3,390.0 1443.3,349.2 1444.3,337.7 1445.3,360.1 1446.3,407.7 1447.3,462.4 1448.3,503.2 1449.2,514.7 1450.2,502.4" stroke="#006a00"/>
<polyline points="1450.2,328.7 1451.2,328.7 1452.2,365.9 1453.2,426.2 1454.2,486.5 1455.2,523.7 1456.2,523.7 1457.1,486.5 1458.1,426.2 1459.1,365.9 1460.1,328.7 1461.1,328.7 1462.1,365.9 1463.1,426.2 1464.1,486.5 1465.0,523.7 1466.0,523.7 1467.0,486.5 1468.0,426.2 1469.0,365.9 1470.0,328.7 1471.0,328.7 1472.0,365.9 1472.9,426.2 1473.9,486.5 1474.9,523.7 1475.9,523.7 1476.9,486.5 1477.9,426.2" stroke="#f00000"/>
<polyline points="1450.2,502.4 1451.2,447.5 1452.2,384.5 1453.2,337.4 1454.2,324.2 1455.2,350.0 1456.2,404.9 1457.1,467.9 1458.1,515.0 1459.1,528.2 1460.1,502.4 1461.1,447.5 1462.1,384.5 1463.1,337.4 1464.1,324.2 1465.0,350.0 1466.0,404.9 1467.0,467.9 1468.0,515.0 1469.0,528.2 1470.0,502.4 1471.0,447.5 1472.0,384.5 1472.9,337.4 1473.9,324.2 1474.9,350.0 1475.9,404.9 1476.9,467.9 1477.9,511.5" stroke="#006a00"/>
<polyline points="1450.2,447.5 1451.2,502.4 1452.2,528.2 1453.2,515.0 1454.2,467.9 1455.2,404.9 1456.2,350.0 1457.1,324.2 1458.1,337.4 1459.1,384.5 1460.1,447.5 1461.1,502.4 1462.1,528.2 1463.1,515.0 1464.1,467.9 1465.0,404.9 1466.0,350.0 1467.0,324.2 1468.0,337.4 1469.0,384.5 1470.0,447.5 1471.0,502.4 1472.0,528.2 1472.9,515.0 1473.9,467.9 1474.9,404.9 1475.9,350.0 1476.9,324.2 1477.9,340.9" stroke="#0000c8"/>
<polyline points="1477.9,511.5 1478.9,524.1 1479.9,499.4 1480.8,446.7 1481.8,386.1 1482.8,340.9 1483.8,328.3 1484.8,353.0 1485.8,405.7 1486.8,466.3 1487.8,511.5 1488.7,524.1 1489.7,499.4 1490.7,446.7 1491.7,386.1 1492.7,340.9 1493.7,328.3 1494.7,353.0 1495.7,405.7 1496.6,466.3 1497.6,511.5 1498.6,524.1 1499.6,499.4 1500.6,446.7 1501.6,386.1 1502.6,340.9 1503.6,328.3 1504.5,353.0 1505.5,405.7 1506.5,464.6" stroke="#006a00"/>
<polyline points="1477.9,340.9 1478.9,386.1 1479.9,446.7 1480.8,499.4 1481.8,524.1 1482.8,511.5 1483.8,466.3 1484.8,405.7 1485.8,353.0 1486.8,328.3 1487.8,340.9 1488.7,386.1 1489.7,446.7 1490.7,499.4 1491.7,524.1 1492.7,511.5 1493.7,466.3 1494.7,405.7 1495.7,353.0 1496.6,328.3 1497.6,340.9 1498.6,386.1 1499.6,446.7 1500.6,499.4 1501.6,524.1 1502.6,511.5 1503.6,466.3 1504.5,405.7 1505.5,353.0 1506.5,332.3" stroke="#0000c8"/>
<polyline points="1477.9,426.2 1478.9,368.3 1479.9,332.5 1480.8,332.5 1481.8,368.3 1482.8,426.2 1483.8,484.1 1484.8,519.9 1485.8,519.9 1486.8,484.1 1487.8,426.2 1488.7,368.3 1489.7,332.5 1490.7,332.5 1491.7,368.3 1492.7,426.2 1493.7,484.1 1494.7,519.9 1495.7,519.9 1496.6,484.1 1497.6,426.2 1498.6,368.3 1499.6,332.5 1500.6,332.5 1501.6,368.3 1502.6,426.2 1503.6,484.1 1504.5,519.9 1505.5,519.9 1506.5,481.7" stroke="#f00000"/>
<polyline points="1506.5,332.3 1507.5,344.4 1508.5,387.8 1509.5,445.8 1510.5,496.4 1511.5,520.1 1512.4,508.0 1513.4,464.6 1514.4,406.6 1515.4,356.0 1516.4,332.3 1517.4,344.4 1518.4,387.8 1519.4,445.8 1520.3,496.4 1521.3,520.1 1522.3,508.0 1523.3,464.6 1524.3,406.6 1525.3,356.0 1526.3,332.3 1527.2,344.4 1528.2,387.8 1529.2,445.8 1530.2,496.4 1531.2,520.1 1532.2,508.0 1533.2,464.6 1534.2,406.6 1535.1,359.1" stroke="#0000c8"/>
<polyline points="1506.5,481.7 1507.5,426.2 1508.5,370.7 1509.5,336.4 1510.5,336.4 1511.5,370.7 1512.4,426.2 1513.4,481.7 1514.4,516.0 1515.4,516.0 1516.4,481.7 1517.4,426.2 1518.4,370.7 1519.4,336.4 1520.3,336.4 1521.3,370.7 1522.3,426.2 1523.3,481.7 1524.3,516.0 1525.3,516.0 1526.3,481.7 1527.2,426.2 1528.2,370.7 1529.2,336.4 1530.2,336.4 1531.2,370.7 1532.2,426.2 1533.2,481.7 1534.2,516.0 1535.1,512.1" stroke="#f00000"/>
<polyline points="1506.5,464.6 1507.5,508.0 1508.5,520.1 1509.5,496.4 1510.5,445.8 1511.5,387.8 1512.4,344.4 1513.4,332.3 1514.4,356.0 1515.4,406.6 1516.4,464.6 1517.4,508.0 1518.4,520.1 1519.4,496.4 1520.3,445.8 1521.3,387.8 1522.3,344.4 1523.3,332.3 1524.3,356.0 1525.3,406.6 1526.3,464.6 1527.2,508.0 1528.2,520.1 1529.2,496.4 1530.2,445.8 1531.2,387.8 1532.2,344.4 1533.2,332.3 1534.2,356.0 1535.1,407.4" stroke="#006a00"/>
<polyline points="1535.1,512.1 1536.1,479.3 1537.1,426.2 1538.1,373.1 1539.1,340.3 1540.1,340.3 1541.1,373.1 1542.1,426.2 1543.0,479.3 1544.0,512.1 1545.0,512.1 1546.0,479.3 1547.0,426.2 1548.0,373.1 1549.0,340.3 1550.0,340.3 1550.9,373.1 1551.9,426.2 1552.9,479.3 1553.9,512.1 1554.9,512.1 1555.9,479.3 1556.9,426.2 1557.9,373.1 1558.8,340.3 1559.8,340.3 1560.8,373.1 1561.8,426.2 1562.8,476.9" stroke="#f00000"/>
<polyline points="1535.1,407.4 1536.1,462.9 1537.1,504.4 1538.1,516.1 1539.1,493.3 1540.1,445.0 1541.1,389.5 1542.1,348.0 1543.0,336.3 1544.0,359.1 1545.0,407.4 1546.0,462.9 1547.0,504.4 1548.0,516.1 1549.0,493.3 1550.0,445.0 1550.9,389.5 1551.9,348.0 1552.9,336.3 1553.9,359.1 1554.9,407.4 1555.9,462.9 1556.9,504.4 1557.9,516.1 1558.8,493.3 1559.8,445.0 1560.8,389.5 1561.8,348.0 1562.8,340.4" stroke="#006a00"/>
<polyline points="1535.1,359.1 1536.1,336.3 1537.1,348.0 1538.1,389.5 1539.1,445.0 1540.1,493.3 1541.1,516.1 1542.1,504.4 1543.0,462.9 1544.0,407.4 1545.0,359.1 1546.0,336.3 1547.0,348.0 1548.0,389.5 1549.0,445.0 1550.0,493.3 1550.9,516.1 1551.9,504.4 1552.9,462.9 1553.9,407.4 1554.9,359.1 1555.9,336.3 1556.9,348.0 1557.9,389.5 1558.8,445.0 1559.8,493.3 1560.8,516.1 1561.8,504.4 1562.8,461.3" stroke="#0000c8"/>
<polyline points="1562.8,340.4 1563.8,362.1 1564.8,408.3 1565.8,461.3 1566.7,500.9 1567.7,512.0 1568.7,490.3 1569.7,444.1 1570.7,391.1 1571.7,351.5 1572.7,340.4 1573.7,362.1 1574.6,408.3 1575.6,461.3 1576.6,500.9 1577.6,512.0 1578.6,490.3 1579.6,444.1 1580.6,391.1 1581.6,351.5 1582.5,340.4 1583.5,362.1 1584.5,408.3 1585.5,461.3 1586.5,500.9 1587.5,512.0 1588.5,490.3 1589.5,444.1 1590.4,391.1 1591.4,355.0" stroke="#006a00"/>
<polyline points="1562.8,461.3 1563.8,408.3 1564.8,362.1 1565.8,340.4 1566.7,351.5 1567.7,391.1 1568.7,444.1 1569.7,490.3 1570.7,512.0 1571.7,500.9 1572.7,461.3 1573.7,408.3 1574.6,362.1 1575.6,340.4 1576.6,351.5 1577.6,391.1 1578.6,444.1 1579.6,490.3 1580.6,512.0 1581.6,500.9 1582.5,461.3 1583.5,408.3 1584.5,362.1 1585.5,340.4 1586.5,351.5 1587.5,391.1 1588.5,444.1 1589.5,490.3 1590.4,512.0 1591.4,497.4" stroke="#0000c8"/>
<polyline points="1562.8,476.9 1563.8,508.3 1564.8,508.3 1565.8,476.9 1566.7,426.2 1567.7,375.5 1568.7,344.1 1569.7,344.1 1570.7,375.5 1571.7,426.2 1572.7,476.9 1573.7,508.3 1574.6,508.3 1575.6,476.9 1576.6,426.2 1577.6,375.5 1578.6,344.1 1579.6,344.1 1580.6,375.5 1581.6,426.2 1582.5,476.9 1583.5,508.3 1584.5,508.3 1585.5,476.9 1586.5,426.2 1587.5,375.5 1588.5,344.1 1589.5,344.1 1590.4,375.5 1591.4,426.2" stroke="#f00000"/>
<polyline points="1591.4,497.4 1592.4,459.6 1593.4,409.1 1594.4,365.1 1595.4,344.4 1596.4,355.0 1597.4,392.8 1598.3,443.3 1599.3,487.3 1600.3,508.0 1601.3,497.4 1602.3,459.6 1603.3,409.1 1604.3,365.1 1605.3,344.4 1606.2,355.0 1607.2,392.8 1608.2,443.3 1609.2,487.3 1610.2,508.0 1611.2,497.4 1612.2,459.6 1613.2,409.1 1614.1,365.1 1615.1,344.4 1616.1,355.0 1617.1,392.8 1618.1,443.3 1619.1,484.3" stroke="#0000c8"/>
<polyline points="1591.4,426.2 1592.4,474.5 1593.4,504.4 1594.4,504.4 1595.4,474.5 1596.4,426.2 1597.4,377.9 1598.3,348.0 1599.3,348.0 1600.3,377.9 1601.3,426.2 1602.3,474.5 1603.3,504.4 1604.3,504.4 1605.3,474.5 1606.2,426.2 1607.2,377.9 1608.2,348.0 1609.2,348.0 1610.2,377.9 1611.2,426.2 1612.2,474.5 1613.2,504.4 1614.1,504.4 1615.1,474.5 1616.1,426.2 1617.1,377.9 1618.1,348.0 1619.1,351.9" stroke="#f00000"/>
<polyline points="1591.4,355.0 1592.4,344.4 1593.4,365.1 1594.4,409.1 1595.4,459.6 1596.4,497.4 1597.4,508.0 1598.3,487.3 1599.3,443.3 1600.3,392.8 1601.3,355.0 1602.3,344.4 1603.3,365.1 1604.3,409.1 1605.3,459.6 1606.2,497.4 1607.2,508.0 1608.2,487.3 1609.2,443.3 1610.2,392.8 1611.2,355.0 1612.2,344.4 1613.2,365.1 1614.1,409.1 1615.1,459.6 1616.1,497.4 1617.1,508.0 1618.1,487.3 1619.1,442.5" stroke="#006a00"/>
<polyline points="1619.1,351.9 1620.1,380.3 1621.1,426.2 1622.0,472.1 1623.0,500.5 1624.0,500.5 1625.0,472.1 1626.0,426.2 1627.0,380.3 1628.0,351.9 1629.0,351.9 1629.9,380.3 1630.9,426.2 1631.9,472.1 1632.9,500.5 1633.9,500.5 1634.9,472.1 1635.9,426.2 1636.9,380.3 1637.8,351.9 1638.8,351.9 1639.8,380.3 1640.8,426.2 1641.8,472.1 1642.8,500.5 1643.8,500.5 1644.8,472.1 1645.7,426.2 1646.7,380.3 1647.7,355.7" stroke="#f00000"/>
<polyline points="1619.1,442.5 1620.1,394.4 1621.1,358.5 1622.0,348.5 1623.0,368.1 1624.0,409.9 1625.0,458.0 1626.0,493.9 1627.0,503.9 1628.0,484.3 1629.0,442.5 1629.9,394.4 1630.9,358.5 1631.9,348.5 1632.9,368.1 1633.9,409.9 1634.9,458.0 1635.9,493.9 1636.9,503.9 1637.8,484.3 1638.8,442.5 1639.8,394.4 1640.8,358.5 1641.8,348.5 1642.8,368.1 1643.8,409.9 1644.8,458.0 1645.7,493.9 1646.7,503.9 1647.7,481.3" stroke="#006a00"/>
<polyline points="1619.1,484.3 1620.1,503.9 1621.1,493.9 1622.0,458.0 1623.0,409.9 1624.0,368.1 1625.0,348.5 1626.0,358.5 1627.0,394.4 1628.0,442.5 1629.0,484.3 1629.9,503.9 1630.9,493.9 1631.9,458.0 1632.9,409.9 1633.9,368.1 1634.9,348.5 1635.9,358.5 1636.9,394.4 1637.8,442.5 1638.8,484.3 1639.8,503.9 1640.8,493.9 1641.8,458.0 1642.8,409.9 1643.8,368.1 1644.8,348.5 1645.7,358.5 1646.7,394.4 1647.7,441.6" stroke="#0000c8"/>
<polyline points="1647.7,481.3 1648.7,441.6 1649.7,396.1 1650.7,362.0 1651.7,352.5 1652.6,371.1 1653.6,410.8 1654.6,456.3 1655.6,490.4 1656.6,499.9 1657.6,481.3 1658.6,441.6 1659.6,396.1 1660.5,362.0 1661.5,352.5 1662.5,371.1 1663.5,410.8 1664.5,456.3 1665.5,490.4 1666.5,499.9 1667.5,481.3 1668.4,441.6 1669.4,396.1 1670.4,362.0 1671.4,352.5 1672.4,371.1 1673.4,410.8 1674.4,456.3 1675.4,484.0" stroke="#006a00"/>
<polyline points="1647.7,441.6 1648.7,481.3 1649.7,499.9 1650.7,490.4 1651.7,456.3 1652.6,410.8 1653.6,371.1 1654.6,352.5 1655.6,362.0 1656.6,396.1 1657.6,441.6 1658.6,481.3 1659.6,499.9 1660.5,490.4 1661.5,456.3 1662.5,410.8 1663.5,371.1 1664.5,352.5 1665.5,362.0 1666.5,396.1 1667.5,441.6 1668.4,481.3 1669.4,499.9 1670.4,490.4 1671.4,456.3 1672.4,410.8 1673.4,371.1 1674.4,352.5 1675.4,368.4" stroke="#0000c8"/>
<polyline points="1647.7,355.7 1648.7,355.7 1649.7,382.6 1650.7,426.2 1651.7,469.8 1652.6,496.7 1653.6,496.7 1654.6,469.8 1655.6,426.2 1656.6,382.6 1657.6,355.7 1658.6,355.7 1659.6,382.6 1660.5,426.2 1661.5,469.8 1662.5,496.7 1663.5,496.7 1664.5,469.8 1665.5,426.2 1666.5,382.6 1667.5,355.7 1668.4,355.7 1669.4,382.6 1670.4,426.2 1671.4,469.8 1672.4,496.7 1673.4,496.7 1674.4,469.8 1675.4,426.2" stroke="#f00000"/>
<polyline points="1675.4,368.4 1676.3,399.1 1677.3,440.1 1678.3,475.8 1679.3,492.5 1680.3,484.0 1681.3,453.3 1682.3,412.3 1683.3,376.6 1684.2,359.9 1685.2,368.4 1686.2,399.1 1687.2,440.1 1688.2,475.8 1689.2,492.5 1690.2,484.0 1691.2,453.3 1692.1,412.3 1693.1,376.6 1694.1,359.9 1695.1,368.4 1696.1,399.1 1697.1,440.1 1698.1,475.8 1699.1,492.5 1700.0,484.0 1701.0,453.3 1702.0,412.3 1703.0,376.6 1704.0,367.2" stroke="#0000c8"/>
<polyline points="1675.4,426.2 1676.3,387.0 1677.3,362.8 1678.3,362.8 1679.3,387.0 1680.3,426.2 1681.3,465.4 1682.3,489.6 1683.3,489.6 1684.2,465.4 1685.2,426.2 1686.2,387.0 1687.2,362.8 1688.2,362.8 1689.2,387.0 1690.2,426.2 1691.2,465.4 1692.1,489.6 1693.1,489.6 1694.1,465.4 1695.1,426.2 1696.1,387.0 1697.1,362.8 1698.1,362.8 1699.1,387.0 1700.0,426.2 1701.0,465.4 1702.0,489.6 1703.0,489.6 1704.0,461.0" stroke="#f00000"/>
<polyline points="1675.4,484.0 1676.3,492.5 1677.3,475.8 1678.3,440.1 1679.3,399.1 1680.3,368.4 1681.3,359.9 1682.3,376.6 1683.3,412.3 1684.2,453.3 1685.2,484.0 1686.2,492.5 1687.2,475.8 1688.2,440.1 1689.2,399.1 1690.2,368.4 1691.2,359.9 1692.1,376.6 1693.1,412.3 1694.1,453.3 1695.1,484.0 1696.1,492.5 1697.1,475.8 1698.1,440.1 1699.1,399.1 1700.0,368.4 1701.0,359.9 1702.0,376.6 1703.0,412.3 1704.0,450.3" stroke="#006a00"/>
<polyline points="1704.0,461.0 1705.0,426.2 1706.0,391.4 1707.0,369.8 1707.9,369.8 1708.9,391.4 1709.9,426.2 1710.9,461.0 1711.9,482.6 1712.9,482.6 1713.9,461.0 1714.9,426.2 1715.8,391.4 1716.8,369.8 1717.8,369.8 1718.8,391.4 1719.8,426.2 1720.8,461.0 1721.8,482.6 1722.8,482.6 1723.7,461.0 1724.7,426.2 1725.7,391.4 1726.7,369.8 1727.7,369.8 1728.7,391.4 1729.7,426.2 1730.7,461.0 1731.6,482.6 1732.6,475.5" stroke="#f00000"/>
<polyline points="1704.0,450.3 1705.0,477.5 1706.0,485.2 1707.0,470.3 1707.9,438.5 1708.9,402.1 1709.9,374.9 1710.9,367.2 1711.9,382.1 1712.9,413.9 1713.9,450.3 1714.9,477.5 1715.8,485.2 1716.8,470.3 1717.8,438.5 1718.8,402.1 1719.8,374.9 1720.8,367.2 1721.8,382.1 1722.8,413.9 1723.7,450.3 1724.7,477.5 1725.7,485.2 1726.7,470.3 1727.7,438.5 1728.7,402.1 1729.7,374.9 1730.7,367.2 1731.6,382.1 1732.6,415.4" stroke="#006a00"/>
<polyline points="1704.0,367.2 1705.0,374.9 1706.0,402.1 1707.0,438.5 1707.9,470.3 1708.9,485.2 1709.9,477.5 1710.9,450.3 1711.9,413.9 1712.9,382.1 1713.9,367.2 1714.9,374.9 1715.8,402.1 1716.8,438.5 1717.8,470.3 1718.8,485.2 1719.8,477.5 1720.8,450.3 1721.8,413.9 1722.8,382.1 1723.7,367.2 1724.7,374.9 1725.7,402.1 1726.7,438.5 1727.7,470.3 1728.7,485.2 1729.7,477.5 1730.7,450.3 1731.6,413.9 1732.6,387.7" stroke="#0000c8"/>
<polyline points="1732.6,415.4 1733.6,447.3 1734.6,471.1 1735.6,477.8 1736.6,464.7 1737.6,437.0 1738.6,405.1 1739.5,381.3 1740.5,374.6 1741.5,387.7 1742.5,415.4 1743.5,447.3 1744.5,471.1 1745.5,477.8 1746.5,464.7 1747.4,437.0 1748.4,405.1 1749.4,381.3 1750.4,374.6 1751.4,387.7 1752.4,415.4 1753.4,447.3 1754.4,471.1 1755.3,477.8 1756.3,464.7 1757.3,437.0 1758.3,405.1 1759.3,381.3 1760.3,382.0" stroke="#006a00"/>
<polyline points="1732.6,387.7 1733.6,374.6 1734.6,381.3 1735.6,405.1 1736.6,437.0 1737.6,464.7 1738.6,477.8 1739.5,471.1 1740.5,447.3 1741.5,415.4 1742.5,387.7 1743.5,374.6 1744.5,381.3 1745.5,405.1 1746.5,437.0 1747.4,464.7 1748.4,477.8 1749.4,471.1 1750.4,447.3 1751.4,415.4 1752.4,387.7 1753.4,374.6 1754.4,381.3 1755.3,405.1 1756.3,437.0 1757.3,464.7 1758.3,477.8 1759.3,471.1 1760.3,444.3" stroke="#0000c8"/>
<polyline points="1732.6,475.5 1733.6,456.7 1734.6,426.2 1735.6,395.7 1736.6,376.9 1737.6,376.9 1738.6,395.7 1739.5,426.2 1740.5,456.7 1741.5,475.5 1742.5,475.5 1743.5,456.7 1744.5,426.2 1745.5,395.7 1746.5,376.9 1747.4,376.9 1748.4,395.7 1749.4,426.2 1750.4,456.7 1751.4,475.5 1752.4,475.5 1753.4,456.7 1754.4,426.2 1755.3,395.7 1756.3,376.9 1757.3,376.9 1758.3,395.7 1759.3,426.2 1760.3,452.3" stroke="#f00000"/>
<polyline points="1760.3,444.3 1761.3,417.0 1762.3,393.2 1763.2,382.0 1764.2,387.7 1765.2,408.1 1766.2,435.4 1767.2,459.2 1768.2,470.4 1769.2,464.7 1770.2,444.3 1771.1,417.0 1772.1,393.2 1773.1,382.0 1774.1,387.7 1775.1,408.1 1776.1,435.4 1777.1,459.2 1778.0,470.4 1779.0,464.7 1780.0,444.3 1781.0,417.0 1782.0,393.2 1783.0,382.0 1784.0,387.7 1785.0,408.1 1785.9,435.4 1786.9,459.2 1787.9,470.4 1788.9,458.3" stroke="#0000c8"/>
<polyline points="1760.3,452.3 1761.3,468.5 1762.3,468.5 1763.2,452.3 1764.2,426.2 1765.2,400.1 1766.2,383.9 1767.2,383.9 1768.2,400.1 1769.2,426.2 1770.2,452.3 1771.1,468.5 1772.1,468.5 1773.1,452.3 1774.1,426.2 1775.1,400.1 1776.1,383.9 1777.1,383.9 1778.0,400.1 1779.0,426.2 1780.0,452.3 1781.0,468.5 1782.0,468.5 1783.0,452.3 1784.0,426.2 1785.0,400.1 1785.9,383.9 1786.9,383.9 1787.9,400.1 1788.9,426.2" stroke="#f00000"/>
<polyline points="1760.3,382.0 1761.3,393.2 1762.3,417.0 1763.2,444.3 1764.2,464.7 1765.2,470.4 1766.2,459.2 1767.2,435.4 1768.2,408.1 1769.2,387.7 1770.2,382.0 1771.1,393.2 1772.1,417.0 1773.1,444.3 1774.1,464.7 1775.1,470.4 1776.1,459.2 1777.1,435.4 1778.0,408.1 1779.0,387.7 1780.0,382.0 1781.0,393.2 1782.0,417.0 1783.0,444.3 1784.0,464.7 1785.0,470.4 1785.9,459.2 1786.9,435.4 1787.9,408.1 1788.9,394.1" stroke="#006a00"/>
<polyline points="1788.9,426.2 1789.9,448.0 1790.9,461.4 1791.9,461.4 1792.9,448.0 1793.8,426.2 1794.8,404.4 1795.8,391.0 1796.8,391.0 1797.8,404.4 1798.8,426.2 1799.8,448.0 1800.8,461.4 1801.7,461.4 1802.7,448.0 1803.7,426.2 1804.7,404.4 1805.7,391.0 1806.7,391.0 1807.7,404.4 1808.7,426.2 1809.6,448.0 1810.6,461.4 1811.6,461.4 1812.6,448.0 1813.6,426.2 1814.6,404.4 1815.6,391.0 1816.6,398.0" stroke="#f00000"/>
<polyline points="1788.9,394.1 1789.9,389.4 1790.9,398.7 1791.9,418.5 1792.9,441.3 1793.8,458.3 1794.8,463.0 1795.8,453.7 1796.8,433.9 1797.8,411.1 1798.8,394.1 1799.8,389.4 1800.8,398.7 1801.7,418.5 1802.7,441.3 1803.7,458.3 1804.7,463.0 1805.7,453.7 1806.7,433.9 1807.7,411.1 1808.7,394.1 1809.6,389.4 1810.6,398.7 1811.6,418.5 1812.6,441.3 1813.6,458.3 1814.6,463.0 1815.6,453.7 1816.6,432.4" stroke="#006a00"/>
<polyline points="1788.9,458.3 1789.9,441.3 1790.9,418.5 1791.9,398.7 1792.9,389.4 1793.8,394.1 1794.8,411.1 1795.8,433.9 1796.8,453.7 1797.8,463.0 1798.8,458.3 1799.8,441.3 1800.8,418.5 1801.7,398.7 1802.7,389.4 1803.7,394.1 1804.7,411.1 1805.7,433.9 1806.7,453.7 1807.7,463.0 1808.7,458.3 1809.6,441.3 1810.6,418.5 1811.6,398.7 1812.6,389.4 1813.6,394.1 1814.6,411.1 1815.6,433.9 1816.6,448.2" stroke="#0000c8"/>
<polyline points="1816.6,432.4 1817.5,414.1 1818.5,400.5 1819.5,396.7 1820.5,404.2 1821.5,420.0 1822.5,438.3 1823.5,451.9 1824.5,455.7 1825.4,448.2 1826.4,432.4 1827.4,414.1 1828.4,400.5 1829.4,396.7 1830.4,404.2 1831.4,420.0 1832.4,438.3 1833.3,451.9 1834.3,455.7 1835.3,448.2 1836.3,432.4 1837.3,414.1 1838.3,400.5 1839.3,396.7 1840.3,404.2 1841.2,420.0 1842.2,438.3 1843.2,451.9 1844.2,455.7 1845.2,442.7" stroke="#006a00"/>
<polyline points="1816.6,448.2 1817.5,455.7 1818.5,451.9 1819.5,438.3 1820.5,420.0 1821.5,404.2 1822.5,396.7 1823.5,400.5 1824.5,414.1 1825.4,432.4 1826.4,448.2 1827.4,455.7 1828.4,451.9 1829.4,438.3 1830.4,420.0 1831.4,404.2 1832.4,396.7 1833.3,400.5 1834.3,414.1 1835.3,432.4 1836.3,448.2 1837.3,455.7 1838.3,451.9 1839.3,438.3 1840.3,420.0 1841.2,404.2 1842.2,396.7 1843.2,400.5 1844.2,414.1 1845.2,430.8" stroke="#0000c8"/>
<polyline points="1816.6,398.0 1817.5,408.8 1818.5,426.2 1819.5,443.6 1820.5,454.4 1821.5,454.4 1822.5,443.6 1823.5,426.2 1824.5,408.8 1825.4,398.0 1826.4,398.0 1827.4,408.8 1828.4,426.2 1829.4,443.6 1830.4,454.4 1831.4,454.4 1832.4,443.6 1833.3,426.2 1834.3,408.8 1835.3,398.0 1836.3,398.0 1837.3,408.8 1838.3,426.2 1839.3,443.6 1840.3,454.4 1841.2,454.4 1842.2,443.6 1843.2,426.2 1844.2,408.8 1845.2,405.1" stroke="#f00000"/>
<polyline points="1845.2,430.8 1846.2,442.7 1847.2,448.3 1848.2,445.4 1849.1,435.2 1850.1,421.6 1851.1,409.7 1852.1,404.1 1853.1,407.0 1854.1,417.2 1855.1,430.8 1856.1,442.7 1857.0,448.3 1858.0,445.4 1859.0,435.2 1860.0,421.6 1861.0,409.7 1862.0,404.1 1863.0,407.0 1864.0,417.2 1864.9,430.8 1865.9,442.7 1866.9,448.3 1867.9,445.4 1868.9,435.2 1869.9,421.6 1870.9,409.7 1871.9,404.1 1872.8,407.0" stroke="#0000c8"/>
<polyline points="1845.2,405.1 1846.2,405.1 1847.2,413.1 1848.2,426.2 1849.1,439.3 1850.1,447.3 1851.1,447.3 1852.1,439.3 1853.1,426.2 1854.1,413.1 1855.1,405.1 1856.1,405.1 1857.0,413.1 1858.0,426.2 1859.0,439.3 1860.0,447.3 1861.0,447.3 1862.0,439.3 1863.0,426.2 1864.0,413.1 1864.9,405.1 1865.9,405.1 1866.9,413.1 1867.9,426.2 1868.9,439.3 1869.9,447.3 1870.9,447.3 1871.9,439.3 1872.8,426.2" stroke="#f00000"/>
<polyline points="1845.2,442.7 1846.2,430.8 1847.2,417.2 1848.2,407.0 1849.1,404.1 1850.1,409.7 1851.1,421.6 1852.1,435.2 1853.1,445.4 1854.1,448.3 1855.1,442.7 1856.1,430.8 1857.0,417.2 1858.0,407.0 1859.0,404.1 1860.0,409.7 1861.0,421.6 1862.0,435.2 1863.0,445.4 1864.0,448.3 1864.9,442.7 1865.9,430.8 1866.9,417.2 1867.9,407.0 1868.9,404.1 1869.9,409.7 1870.9,421.6 1871.9,435.2 1872.8,445.4" stroke="#006a00"/>
</g>
<path d="M1280.400 426.5H1873" stroke="#000" stroke-width="1.200"/>
<path d="M1280.400 313V568M1280.400 539.500H1873" stroke="#000" stroke-width="1.300" fill="none"/>
<path d="M1276 518.5h9M1873 518.5h-5 M1276 495.5h9M1873 495.5h-5 M1276 472.5h9M1873 472.5h-5 M1276 449.5h9M1873 449.5h-5 M1276 426.5h9M1873 426.5h-5 M1276 403.5h9M1873 403.5h-5 M1276 379.5h9M1873 379.5h-5 M1276 356.5h9M1873 356.5h-5 M1276 333.5h9M1873 333.5h-5 M1379.5 313v6M1379.5 539v-6 M1477.5 313v6M1477.5 539v-6 M1576.5 313v6M1576.5 539v-6 M1675.5 313v6M1675.5 539v-6 M1774.5 313v6M1774.5 539v-6 M1872.5 313v6M1872.5 539v-6" stroke="#000" stroke-width="1.200" fill="none"/>
<text x="1268.500" y="521.8" font-size="8.500" text-anchor="end">-8</text>
<text x="1268.500" y="498.6" font-size="8.500" text-anchor="end">-6</text>
<text x="1268.500" y="475.5" font-size="8.500" text-anchor="end">-4</text>
<text x="1268.500" y="452.3" font-size="8.500" text-anchor="end">-2</text>
<text x="1268.500" y="429.2" font-size="8.500" text-anchor="end">0</text>
<text x="1268.500" y="406.1" font-size="8.500" text-anchor="end">2</text>
<text x="1268.500" y="382.9" font-size="8.500" text-anchor="end">4</text>
<text x="1268.500" y="359.8" font-size="8.500" text-anchor="end">6</text>
<text x="1268.500" y="336.6" font-size="8.500" text-anchor="end">8</text>
<text x="1280.4" y="554" font-size="8.500" text-anchor="middle">0.0</text>
<text x="1379.1" y="554" font-size="8.500" text-anchor="middle">0.2</text>
<text x="1477.9" y="554" font-size="8.500" text-anchor="middle">0.4</text>
<text x="1576.6" y="554" font-size="8.500" text-anchor="middle">0.6</text>
<text x="1675.4" y="554" font-size="8.500" text-anchor="middle">0.8</text>
<text x="1774.1" y="554" font-size="8.500" text-anchor="middle">1.0</text>
<text x="1872.8" y="554" font-size="8.500" text-anchor="middle">1.2</text>
<text transform="translate(1253,426) rotate(-90)" font-size="9.500" letter-spacing="0.7" text-anchor="middle" xml:space="preserve">Current  Group A (A)</text>
<rect x="1285.500" y="288" width="373" height="12.500" fill="#fff" stroke="#000" stroke-width="1.100"/>
<path d="M1288 294.500h25" stroke="#c03030" stroke-width="1"/><rect x="1321" y="291" width="6" height="6" fill="#000"/><text x="1328" y="298" font-size="10.500" letter-spacing="0.1">I L1: I L1</text>
<path d="M1412.5 294.500h25" stroke="#409040" stroke-width="1"/><rect x="1445.5" y="291" width="6" height="6" fill="#000"/><text x="1452.5" y="298" font-size="10.500" letter-spacing="0.1">I L2: I L2</text>
<path d="M1537.5 294.500h25" stroke="#3030a0" stroke-width="1"/><rect x="1570.5" y="291" width="6" height="6" fill="#000"/><text x="1577.5" y="298" font-size="10.500" letter-spacing="0.1">I L3: I L3</text>
<rect x="1280.400" y="599.500" width="593" height="225.500" fill="#fff"/>
<path d="M1281 821.5H1873 M1281 803.5H1873 M1281 785.5H1873 M1281 767.5H1873 M1281 748.5H1873 M1281 730.5H1873 M1281 694.5H1873 M1281 676.5H1873 M1281 657.5H1873 M1281 639.5H1873 M1281 621.5H1873 M1281 603.5H1873 M1379.5 600V825 M1477.5 600V825 M1576.5 600V825 M1675.5 600V825 M1774.5 600V825 M1872.5 600V825" stroke="#7c7c7c" stroke-width="1" stroke-dasharray="5 4" fill="none"/>
<g fill="none" stroke-width="1.050" stroke-linejoin="bevel">
<polyline points="1280.4,712.4 1281.4,724.6 1282.4,732.1 1283.4,732.1 1284.3,724.6 1285.3,712.4 1286.3,700.2 1287.3,692.7 1288.3,692.7 1289.3,700.2 1290.3,712.4 1291.3,724.6 1292.2,732.1 1293.2,732.1 1294.2,724.6 1295.2,712.4 1296.2,700.2 1297.2,692.7 1298.2,692.7 1299.2,700.2 1300.1,712.4 1301.1,724.6 1302.1,732.1 1303.1,732.1 1304.1,724.6 1305.1,712.4 1306.1,700.2 1307.1,692.7 1308.0,692.7 1309.0,692.1" stroke="#f00000"/>
<polyline points="1280.4,694.5 1281.4,691.8 1282.4,697.0 1283.4,708.1 1284.3,720.8 1285.3,730.3 1286.3,733.0 1287.3,727.8 1288.3,716.7 1289.3,704.0 1290.3,694.5 1291.3,691.8 1292.2,697.0 1293.2,708.1 1294.2,720.8 1295.2,730.3 1296.2,733.0 1297.2,727.8 1298.2,716.7 1299.2,704.0 1300.1,694.5 1301.1,691.8 1302.1,697.0 1303.1,708.1 1304.1,720.8 1305.1,730.3 1306.1,733.0 1307.1,727.8 1308.0,716.7 1309.0,698.4" stroke="#006a00"/>
<polyline points="1280.4,730.3 1281.4,720.8 1282.4,708.1 1283.4,697.0 1284.3,691.8 1285.3,694.5 1286.3,704.0 1287.3,716.7 1288.3,727.8 1289.3,733.0 1290.3,730.3 1291.3,720.8 1292.2,708.1 1293.2,697.0 1294.2,691.8 1295.2,694.5 1296.2,704.0 1297.2,716.7 1298.2,727.8 1299.2,733.0 1300.1,730.3 1301.1,720.8 1302.1,708.1 1303.1,697.0 1304.1,691.8 1305.1,694.5 1306.1,704.0 1307.1,716.7 1308.0,727.8 1309.0,746.7" stroke="#0000c8"/>
<polyline points="1309.0,698.4 1310.0,682.5 1311.0,678.1 1312.0,686.8 1313.0,705.2 1314.0,726.4 1315.0,742.3 1315.9,746.7 1316.9,738.0 1317.9,719.6 1318.9,698.4 1319.9,682.5 1320.9,678.1 1321.9,686.8 1322.9,705.2 1323.8,726.4 1324.8,742.3 1325.8,746.7 1326.8,738.0 1327.8,719.6 1328.8,698.4 1329.8,682.5 1330.8,678.1 1331.7,686.8 1332.7,705.2 1333.7,726.4 1334.7,742.3 1335.7,746.7 1336.7,738.0 1337.7,722.4" stroke="#006a00"/>
<polyline points="1309.0,746.7 1310.0,742.3 1311.0,726.4 1312.0,705.2 1313.0,686.8 1314.0,678.1 1315.0,682.5 1315.9,698.4 1316.9,719.6 1317.9,738.0 1318.9,746.7 1319.9,742.3 1320.9,726.4 1321.9,705.2 1322.9,686.8 1323.8,678.1 1324.8,682.5 1325.8,698.4 1326.8,719.6 1327.8,738.0 1328.8,746.7 1329.8,742.3 1330.8,726.4 1331.7,705.2 1332.7,686.8 1333.7,678.1 1334.7,682.5 1335.7,698.4 1336.7,719.6 1337.7,748.3" stroke="#0000c8"/>
<polyline points="1309.0,692.1 1310.0,712.4 1311.0,732.7 1312.0,745.2 1313.0,745.2 1314.0,732.7 1315.0,712.4 1315.9,692.1 1316.9,679.6 1317.9,679.6 1318.9,692.1 1319.9,712.4 1320.9,732.7 1321.9,745.2 1322.9,745.2 1323.8,732.7 1324.8,712.4 1325.8,692.1 1326.8,679.6 1327.8,679.6 1328.8,692.1 1329.8,712.4 1330.8,732.7 1331.7,745.2 1332.7,745.2 1333.7,732.7 1334.7,712.4 1335.7,692.1 1336.7,679.6 1337.7,666.5" stroke="#f00000"/>
<polyline points="1337.7,748.3 1338.7,760.4 1339.6,754.2 1340.6,732.0 1341.6,702.4 1342.6,676.5 1343.6,664.4 1344.6,670.6 1345.6,692.8 1346.6,722.4 1347.5,748.3 1348.5,760.4 1349.5,754.2 1350.5,732.0 1351.5,702.4 1352.5,676.5 1353.5,664.4 1354.5,670.6 1355.4,692.8 1356.4,722.4 1357.4,748.3 1358.4,760.4 1359.4,754.2 1360.4,732.0 1361.4,702.4 1362.4,676.5 1363.3,664.4 1364.3,670.6 1365.3,687.1" stroke="#0000c8"/>
<polyline points="1337.7,666.5 1338.7,684.0 1339.6,712.4 1340.6,740.8 1341.6,758.3 1342.6,758.3 1343.6,740.8 1344.6,712.4 1345.6,684.0 1346.6,666.5 1347.5,666.5 1348.5,684.0 1349.5,712.4 1350.5,740.8 1351.5,758.3 1352.5,758.3 1353.5,740.8 1354.5,712.4 1355.4,684.0 1356.4,666.5 1357.4,666.5 1358.4,684.0 1359.4,712.4 1360.4,740.8 1361.4,758.3 1362.4,758.3 1363.3,740.8 1364.3,712.4 1365.3,675.9" stroke="#f00000"/>
<polyline points="1337.7,722.4 1338.7,692.8 1339.6,670.6 1340.6,664.4 1341.6,676.5 1342.6,702.4 1343.6,732.0 1344.6,754.2 1345.6,760.4 1346.6,748.3 1347.5,722.4 1348.5,692.8 1349.5,670.6 1350.5,664.4 1351.5,676.5 1352.5,702.4 1353.5,732.0 1354.5,754.2 1355.4,760.4 1356.4,748.3 1357.4,722.4 1358.4,692.8 1359.4,670.6 1360.4,664.4 1361.4,676.5 1362.4,702.4 1363.3,732.0 1364.3,754.2 1365.3,774.1" stroke="#006a00"/>
<polyline points="1365.3,675.9 1366.3,653.4 1367.3,653.4 1368.3,675.9 1369.3,712.4 1370.3,748.9 1371.2,771.4 1372.2,771.4 1373.2,748.9 1374.2,712.4 1375.2,675.9 1376.2,653.4 1377.2,653.4 1378.2,675.9 1379.1,712.4 1380.1,748.9 1381.1,771.4 1382.1,771.4 1383.1,748.9 1384.1,712.4 1385.1,675.9 1386.1,653.4 1387.0,653.4 1388.0,675.9 1389.0,712.4 1390.0,748.9 1391.0,771.4 1392.0,771.4 1393.0,748.9 1394.0,712.4" stroke="#f00000"/>
<polyline points="1365.3,774.1 1366.3,758.5 1367.3,725.3 1368.3,687.1 1369.3,658.6 1370.3,650.7 1371.2,666.3 1372.2,699.5 1373.2,737.7 1374.2,766.2 1375.2,774.1 1376.2,758.5 1377.2,725.3 1378.2,687.1 1379.1,658.6 1380.1,650.7 1381.1,666.3 1382.1,699.5 1383.1,737.7 1384.1,766.2 1385.1,774.1 1386.1,758.5 1387.0,725.3 1388.0,687.1 1389.0,658.6 1390.0,650.7 1391.0,666.3 1392.0,699.5 1393.0,737.7 1394.0,778.1" stroke="#006a00"/>
<polyline points="1365.3,687.1 1366.3,725.3 1367.3,758.5 1368.3,774.1 1369.3,766.2 1370.3,737.7 1371.2,699.5 1372.2,666.3 1373.2,650.7 1374.2,658.6 1375.2,687.1 1376.2,725.3 1377.2,758.5 1378.2,774.1 1379.1,766.2 1380.1,737.7 1381.1,699.5 1382.1,666.3 1383.1,650.7 1384.1,658.6 1385.1,687.1 1386.1,725.3 1387.0,758.5 1388.0,774.1 1389.0,766.2 1390.0,737.7 1391.0,699.5 1392.0,666.3 1393.0,650.7 1394.0,646.7" stroke="#0000c8"/>
<polyline points="1394.0,778.1 1394.9,787.9 1395.9,768.8 1396.9,728.2 1397.9,681.5 1398.9,646.7 1399.9,636.9 1400.9,656.0 1401.9,696.6 1402.8,743.3 1403.8,778.1 1404.8,787.9 1405.8,768.8 1406.8,728.2 1407.8,681.5 1408.8,646.7 1409.7,636.9 1410.7,656.0 1411.7,696.6 1412.7,743.3 1413.7,778.1 1414.7,787.9 1415.7,768.8 1416.7,728.2 1417.6,681.5 1418.6,646.7 1419.6,636.9 1420.6,656.0 1421.6,693.8" stroke="#006a00"/>
<polyline points="1394.0,646.7 1394.9,681.5 1395.9,728.2 1396.9,768.8 1397.9,787.9 1398.9,778.1 1399.9,743.3 1400.9,696.6 1401.9,656.0 1402.8,636.9 1403.8,646.7 1404.8,681.5 1405.8,728.2 1406.8,768.8 1407.8,787.9 1408.8,778.1 1409.7,743.3 1410.7,696.6 1411.7,656.0 1412.7,636.9 1413.7,646.7 1414.7,681.5 1415.7,728.2 1416.7,768.8 1417.6,787.9 1418.6,778.1 1419.6,743.3 1420.6,696.6 1421.6,645.7" stroke="#0000c8"/>
<polyline points="1394.0,712.4 1394.9,667.8 1395.9,640.2 1396.9,640.2 1397.9,667.8 1398.9,712.4 1399.9,757.0 1400.9,784.6 1401.9,784.6 1402.8,757.0 1403.8,712.4 1404.8,667.8 1405.8,640.2 1406.8,640.2 1407.8,667.8 1408.8,712.4 1409.7,757.0 1410.7,784.6 1411.7,784.6 1412.7,757.0 1413.7,712.4 1414.7,667.8 1415.7,640.2 1416.7,640.2 1417.6,667.8 1418.6,712.4 1419.6,757.0 1420.6,784.6 1421.6,797.7" stroke="#f00000"/>
<polyline points="1421.6,645.7 1422.6,623.2 1423.6,634.7 1424.6,675.9 1425.5,731.0 1426.5,779.1 1427.5,801.6 1428.5,790.1 1429.5,748.9 1430.5,693.8 1431.5,645.7 1432.5,623.2 1433.4,634.7 1434.4,675.9 1435.4,731.0 1436.4,779.1 1437.4,801.6 1438.4,790.1 1439.4,748.9 1440.4,693.8 1441.3,645.7 1442.3,623.2 1443.3,634.7 1444.3,675.9 1445.3,731.0 1446.3,779.1 1447.3,801.6 1448.3,790.1 1449.2,748.9 1450.2,690.9" stroke="#0000c8"/>
<polyline points="1421.6,797.7 1422.6,765.1 1423.6,712.4 1424.6,659.7 1425.5,627.1 1426.5,627.1 1427.5,659.7 1428.5,712.4 1429.5,765.1 1430.5,797.7 1431.5,797.7 1432.5,765.1 1433.4,712.4 1434.4,659.7 1435.4,627.1 1436.4,627.1 1437.4,659.7 1438.4,712.4 1439.4,765.1 1440.4,797.7 1441.3,797.7 1442.3,765.1 1443.3,712.4 1444.3,659.7 1445.3,627.1 1446.3,627.1 1447.3,659.7 1448.3,712.4 1449.2,765.1 1450.2,810.8" stroke="#f00000"/>
<polyline points="1421.6,693.8 1422.6,748.9 1423.6,790.1 1424.6,801.6 1425.5,779.1 1426.5,731.0 1427.5,675.9 1428.5,634.7 1429.5,623.2 1430.5,645.7 1431.5,693.8 1432.5,748.9 1433.4,790.1 1434.4,801.6 1435.4,779.1 1436.4,731.0 1437.4,675.9 1438.4,634.7 1439.4,623.2 1440.4,645.7 1441.3,693.8 1442.3,748.9 1443.3,790.1 1444.3,801.6 1445.3,779.1 1446.3,731.0 1447.3,675.9 1448.3,634.7 1449.2,623.2 1450.2,635.5" stroke="#006a00"/>
<polyline points="1450.2,810.8 1451.2,810.8 1452.2,773.2 1453.2,712.4 1454.2,651.6 1455.2,614.0 1456.2,614.0 1457.1,651.6 1458.1,712.4 1459.1,773.2 1460.1,810.8 1461.1,810.8 1462.1,773.2 1463.1,712.4 1464.1,651.6 1465.0,614.0 1466.0,614.0 1467.0,651.6 1468.0,712.4 1469.0,773.2 1470.0,810.8 1471.0,810.8 1472.0,773.2 1472.9,712.4 1473.9,651.6 1474.9,614.0 1475.9,614.0 1476.9,651.6 1477.9,712.4" stroke="#f00000"/>
<polyline points="1450.2,635.5 1451.2,690.9 1452.2,754.5 1453.2,802.0 1454.2,815.3 1455.2,789.3 1456.2,733.9 1457.1,670.3 1458.1,622.8 1459.1,609.5 1460.1,635.5 1461.1,690.9 1462.1,754.5 1463.1,802.0 1464.1,815.3 1465.0,789.3 1466.0,733.9 1467.0,670.3 1468.0,622.8 1469.0,609.5 1470.0,635.5 1471.0,690.9 1472.0,754.5 1472.9,802.0 1473.9,815.3 1474.9,789.3 1475.9,733.9 1476.9,670.3 1477.9,631.9" stroke="#006a00"/>
<polyline points="1450.2,690.9 1451.2,635.5 1452.2,609.5 1453.2,622.8 1454.2,670.3 1455.2,733.9 1456.2,789.3 1457.1,815.3 1458.1,802.0 1459.1,754.5 1460.1,690.9 1461.1,635.5 1462.1,609.5 1463.1,622.8 1464.1,670.3 1465.0,733.9 1466.0,789.3 1467.0,815.3 1468.0,802.0 1469.0,754.5 1470.0,690.9 1471.0,635.5 1472.0,609.5 1472.9,622.8 1473.9,670.3 1474.9,733.9 1475.9,789.3 1476.9,815.3 1477.9,792.9" stroke="#0000c8"/>
<polyline points="1477.9,631.9 1478.9,620.0 1479.9,643.3 1480.8,693.1 1481.8,750.2 1482.8,792.9 1483.8,804.8 1484.8,781.5 1485.8,731.7 1486.8,674.6 1487.8,631.9 1488.7,620.0 1489.7,643.3 1490.7,693.1 1491.7,750.2 1492.7,792.9 1493.7,804.8 1494.7,781.5 1495.7,731.7 1496.6,674.6 1497.6,631.9 1498.6,620.0 1499.6,643.3 1500.6,693.1 1501.6,750.2 1502.6,792.9 1503.6,804.8 1504.5,781.5 1505.5,731.7 1506.5,678.9" stroke="#006a00"/>
<polyline points="1477.9,792.9 1478.9,750.2 1479.9,693.1 1480.8,643.3 1481.8,620.0 1482.8,631.9 1483.8,674.6 1484.8,731.7 1485.8,781.5 1486.8,804.8 1487.8,792.9 1488.7,750.2 1489.7,693.1 1490.7,643.3 1491.7,620.0 1492.7,631.9 1493.7,674.6 1494.7,731.7 1495.7,781.5 1496.6,804.8 1497.6,792.9 1498.6,750.2 1499.6,693.1 1500.6,643.3 1501.6,620.0 1502.6,631.9 1503.6,674.6 1504.5,731.7 1505.5,781.5 1506.5,794.4" stroke="#0000c8"/>
<polyline points="1477.9,712.4 1478.9,767.0 1479.9,800.8 1480.8,800.8 1481.8,767.0 1482.8,712.4 1483.8,657.8 1484.8,624.0 1485.8,624.0 1486.8,657.8 1487.8,712.4 1488.7,767.0 1489.7,800.8 1490.7,800.8 1491.7,767.0 1492.7,712.4 1493.7,657.8 1494.7,624.0 1495.7,624.0 1496.6,657.8 1497.6,712.4 1498.6,767.0 1499.6,800.8 1500.6,800.8 1501.6,767.0 1502.6,712.4 1503.6,657.8 1504.5,624.0 1505.5,624.0 1506.5,664.0" stroke="#f00000"/>
<polyline points="1506.5,794.4 1507.5,783.8 1508.5,745.9 1509.5,695.3 1510.5,651.2 1511.5,630.4 1512.4,641.0 1513.4,678.9 1514.4,729.5 1515.4,773.6 1516.4,794.4 1517.4,783.8 1518.4,745.9 1519.4,695.3 1520.3,651.2 1521.3,630.4 1522.3,641.0 1523.3,678.9 1524.3,729.5 1525.3,773.6 1526.3,794.4 1527.2,783.8 1528.2,745.9 1529.2,695.3 1530.2,651.2 1531.2,630.4 1532.2,641.0 1533.2,678.9 1534.2,729.5 1535.1,765.8" stroke="#0000c8"/>
<polyline points="1506.5,664.0 1507.5,712.4 1508.5,760.8 1509.5,790.8 1510.5,790.8 1511.5,760.8 1512.4,712.4 1513.4,664.0 1514.4,634.0 1515.4,634.0 1516.4,664.0 1517.4,712.4 1518.4,760.8 1519.4,790.8 1520.3,790.8 1521.3,760.8 1522.3,712.4 1523.3,664.0 1524.3,634.0 1525.3,634.0 1526.3,664.0 1527.2,712.4 1528.2,760.8 1529.2,790.8 1530.2,790.8 1531.2,760.8 1532.2,712.4 1533.2,664.0 1534.2,634.0 1535.1,644.1" stroke="#f00000"/>
<polyline points="1506.5,678.9 1507.5,641.0 1508.5,630.4 1509.5,651.2 1510.5,695.3 1511.5,745.9 1512.4,783.8 1513.4,794.4 1514.4,773.6 1515.4,729.5 1516.4,678.9 1517.4,641.0 1518.4,630.4 1519.4,651.2 1520.3,695.3 1521.3,745.9 1522.3,783.8 1523.3,794.4 1524.3,773.6 1525.3,729.5 1526.3,678.9 1527.2,641.0 1528.2,630.4 1529.2,651.2 1530.2,695.3 1531.2,745.9 1532.2,783.8 1533.2,794.4 1534.2,773.6 1535.1,727.3" stroke="#006a00"/>
<polyline points="1535.1,644.1 1536.1,670.2 1537.1,712.4 1538.1,754.6 1539.1,780.7 1540.1,780.7 1541.1,754.6 1542.1,712.4 1543.0,670.2 1544.0,644.1 1545.0,644.1 1546.0,670.2 1547.0,712.4 1548.0,754.6 1549.0,780.7 1550.0,780.7 1550.9,754.6 1551.9,712.4 1552.9,670.2 1553.9,644.1 1554.9,644.1 1555.9,670.2 1556.9,712.4 1557.9,754.6 1558.8,780.7 1559.8,780.7 1560.8,754.6 1561.8,712.4 1562.8,676.4" stroke="#f00000"/>
<polyline points="1535.1,727.3 1536.1,683.2 1537.1,650.2 1538.1,640.9 1539.1,659.0 1540.1,697.5 1541.1,741.6 1542.1,774.6 1543.0,783.9 1544.0,765.8 1545.0,727.3 1546.0,683.2 1547.0,650.2 1548.0,640.9 1549.0,659.0 1550.0,697.5 1550.9,741.6 1551.9,774.6 1552.9,783.9 1553.9,765.8 1554.9,727.3 1555.9,683.2 1556.9,650.2 1557.9,640.9 1558.8,659.0 1559.8,697.5 1560.8,741.6 1561.8,774.6 1562.8,773.4" stroke="#006a00"/>
<polyline points="1535.1,765.8 1536.1,783.9 1537.1,774.6 1538.1,741.6 1539.1,697.5 1540.1,659.0 1541.1,640.9 1542.1,650.2 1543.0,683.2 1544.0,727.3 1545.0,765.8 1546.0,783.9 1547.0,774.6 1548.0,741.6 1549.0,697.5 1550.0,659.0 1550.9,640.9 1551.9,650.2 1552.9,683.2 1553.9,727.3 1554.9,765.8 1555.9,783.9 1556.9,774.6 1557.9,741.6 1558.8,697.5 1559.8,659.0 1560.8,640.9 1561.8,650.2 1562.8,687.5" stroke="#0000c8"/>
<polyline points="1562.8,773.4 1563.8,758.0 1564.8,725.1 1565.8,687.5 1566.7,659.3 1567.7,651.4 1568.7,666.8 1569.7,699.7 1570.7,737.3 1571.7,765.5 1572.7,773.4 1573.7,758.0 1574.6,725.1 1575.6,687.5 1576.6,659.3 1577.6,651.4 1578.6,666.8 1579.6,699.7 1580.6,737.3 1581.6,765.5 1582.5,773.4 1583.5,758.0 1584.5,725.1 1585.5,687.5 1586.5,659.3 1587.5,651.4 1588.5,666.8 1589.5,699.7 1590.4,737.3 1591.4,756.4" stroke="#006a00"/>
<polyline points="1562.8,687.5 1563.8,725.1 1564.8,758.0 1565.8,773.4 1566.7,765.5 1567.7,737.3 1568.7,699.7 1569.7,666.8 1570.7,651.4 1571.7,659.3 1572.7,687.5 1573.7,725.1 1574.6,758.0 1575.6,773.4 1576.6,765.5 1577.6,737.3 1578.6,699.7 1579.6,666.8 1580.6,651.4 1581.6,659.3 1582.5,687.5 1583.5,725.1 1584.5,758.0 1585.5,773.4 1586.5,765.5 1587.5,737.3 1588.5,699.7 1589.5,666.8 1590.4,651.4 1591.4,668.4" stroke="#0000c8"/>
<polyline points="1562.8,676.4 1563.8,654.1 1564.8,654.1 1565.8,676.4 1566.7,712.4 1567.7,748.4 1568.7,770.7 1569.7,770.7 1570.7,748.4 1571.7,712.4 1572.7,676.4 1573.7,654.1 1574.6,654.1 1575.6,676.4 1576.6,712.4 1577.6,748.4 1578.6,770.7 1579.6,770.7 1580.6,748.4 1581.6,712.4 1582.5,676.4 1583.5,654.1 1584.5,654.1 1585.5,676.4 1586.5,712.4 1587.5,748.4 1588.5,770.7 1589.5,770.7 1590.4,748.4 1591.4,712.4" stroke="#f00000"/>
<polyline points="1591.4,668.4 1592.4,691.7 1593.4,723.0 1594.4,750.1 1595.4,762.9 1596.4,756.4 1597.4,733.1 1598.3,701.8 1599.3,674.7 1600.3,661.9 1601.3,668.4 1602.3,691.7 1603.3,723.0 1604.3,750.1 1605.3,762.9 1606.2,756.4 1607.2,733.1 1608.2,701.8 1609.2,674.7 1610.2,661.9 1611.2,668.4 1612.2,691.7 1613.2,723.0 1614.1,750.1 1615.1,762.9 1616.1,756.4 1617.1,733.1 1618.1,701.8 1619.1,682.5" stroke="#0000c8"/>
<polyline points="1591.4,712.4 1592.4,682.6 1593.4,664.1 1594.4,664.1 1595.4,682.6 1596.4,712.4 1597.4,742.2 1598.3,760.7 1599.3,760.7 1600.3,742.2 1601.3,712.4 1602.3,682.6 1603.3,664.1 1604.3,664.1 1605.3,682.6 1606.2,712.4 1607.2,742.2 1608.2,760.7 1609.2,760.7 1610.2,742.2 1611.2,712.4 1612.2,682.6 1613.2,664.1 1614.1,664.1 1615.1,682.6 1616.1,712.4 1617.1,742.2 1618.1,760.7 1619.1,750.7" stroke="#f00000"/>
<polyline points="1591.4,756.4 1592.4,762.9 1593.4,750.1 1594.4,723.0 1595.4,691.7 1596.4,668.4 1597.4,661.9 1598.3,674.7 1599.3,701.8 1600.3,733.1 1601.3,756.4 1602.3,762.9 1603.3,750.1 1604.3,723.0 1605.3,691.7 1606.2,668.4 1607.2,661.9 1608.2,674.7 1609.2,701.8 1610.2,733.1 1611.2,756.4 1612.2,762.9 1613.2,750.1 1614.1,723.0 1615.1,691.7 1616.1,668.4 1617.1,661.9 1618.1,674.7 1619.1,704.0" stroke="#006a00"/>
<polyline points="1619.1,750.7 1620.1,736.0 1621.1,712.4 1622.0,688.8 1623.0,674.1 1624.0,674.1 1625.0,688.8 1626.0,712.4 1627.0,736.0 1628.0,750.7 1629.0,750.7 1629.9,736.0 1630.9,712.4 1631.9,688.8 1632.9,674.1 1633.9,674.1 1634.9,688.8 1635.9,712.4 1636.9,736.0 1637.8,750.7 1638.8,750.7 1639.8,736.0 1640.8,712.4 1641.8,688.8 1642.8,674.1 1643.8,674.1 1644.8,688.8 1645.7,712.4 1646.7,736.0 1647.7,740.6" stroke="#f00000"/>
<polyline points="1619.1,704.0 1620.1,728.8 1621.1,747.2 1622.0,752.4 1623.0,742.3 1624.0,720.8 1625.0,696.0 1626.0,677.6 1627.0,672.4 1628.0,682.5 1629.0,704.0 1629.9,728.8 1630.9,747.2 1631.9,752.4 1632.9,742.3 1633.9,720.8 1634.9,696.0 1635.9,677.6 1636.9,672.4 1637.8,682.5 1638.8,704.0 1639.8,728.8 1640.8,747.2 1641.8,752.4 1642.8,742.3 1643.8,720.8 1644.8,696.0 1645.7,677.6 1646.7,672.4 1647.7,690.3" stroke="#006a00"/>
<polyline points="1619.1,682.5 1620.1,672.4 1621.1,677.6 1622.0,696.0 1623.0,720.8 1624.0,742.3 1625.0,752.4 1626.0,747.2 1627.0,728.8 1628.0,704.0 1629.0,682.5 1629.9,672.4 1630.9,677.6 1631.9,696.0 1632.9,720.8 1633.9,742.3 1634.9,752.4 1635.9,747.2 1636.9,728.8 1637.8,704.0 1638.8,682.5 1639.8,672.4 1640.8,677.6 1641.8,696.0 1642.8,720.8 1643.8,742.3 1644.8,752.4 1645.7,747.2 1646.7,728.8 1647.7,706.2" stroke="#0000c8"/>
<polyline points="1647.7,690.3 1648.7,706.2 1649.7,724.5 1650.7,738.1 1651.7,741.9 1652.6,734.5 1653.6,718.6 1654.6,700.3 1655.6,686.7 1656.6,682.9 1657.6,690.3 1658.6,706.2 1659.6,724.5 1660.5,738.1 1661.5,741.9 1662.5,734.5 1663.5,718.6 1664.5,700.3 1665.5,686.7 1666.5,682.9 1667.5,690.3 1668.4,706.2 1669.4,724.5 1670.4,738.1 1671.4,741.9 1672.4,734.5 1673.4,718.6 1674.4,700.3 1675.4,688.0" stroke="#006a00"/>
<polyline points="1647.7,706.2 1648.7,690.3 1649.7,682.9 1650.7,686.7 1651.7,700.3 1652.6,718.6 1653.6,734.5 1654.6,741.9 1655.6,738.1 1656.6,724.5 1657.6,706.2 1658.6,690.3 1659.6,682.9 1660.5,686.7 1661.5,700.3 1662.5,718.6 1663.5,734.5 1664.5,741.9 1665.5,738.1 1666.5,724.5 1667.5,706.2 1668.4,690.3 1669.4,682.9 1670.4,686.7 1671.4,700.3 1672.4,718.6 1673.4,734.5 1674.4,741.9 1675.4,736.8" stroke="#0000c8"/>
<polyline points="1647.7,740.6 1648.7,740.6 1649.7,729.8 1650.7,712.4 1651.7,695.0 1652.6,684.2 1653.6,684.2 1654.6,695.0 1655.6,712.4 1656.6,729.8 1657.6,740.6 1658.6,740.6 1659.6,729.8 1660.5,712.4 1661.5,695.0 1662.5,684.2 1663.5,684.2 1664.5,695.0 1665.5,712.4 1666.5,729.8 1667.5,740.6 1668.4,740.6 1669.4,729.8 1670.4,712.4 1671.4,695.0 1672.4,684.2 1673.4,684.2 1674.4,695.0 1675.4,712.4" stroke="#f00000"/>
<polyline points="1675.4,736.8 1676.3,723.9 1677.3,706.5 1678.3,691.4 1679.3,684.3 1680.3,688.0 1681.3,700.9 1682.3,718.3 1683.3,733.4 1684.2,740.5 1685.2,736.8 1686.2,723.9 1687.2,706.5 1688.2,691.4 1689.2,684.3 1690.2,688.0 1691.2,700.9 1692.1,718.3 1693.1,733.4 1694.1,740.5 1695.1,736.8 1696.1,723.9 1697.1,706.5 1698.1,691.4 1699.1,684.3 1700.0,688.0 1701.0,700.9 1702.0,718.3 1703.0,733.4 1704.0,739.0" stroke="#0000c8"/>
<polyline points="1675.4,712.4 1676.3,729.0 1677.3,739.2 1678.3,739.2 1679.3,729.0 1680.3,712.4 1681.3,695.8 1682.3,685.6 1683.3,685.6 1684.2,695.8 1685.2,712.4 1686.2,729.0 1687.2,739.2 1688.2,739.2 1689.2,729.0 1690.2,712.4 1691.2,695.8 1692.1,685.6 1693.1,685.6 1694.1,695.8 1695.1,712.4 1696.1,729.0 1697.1,739.2 1698.1,739.2 1699.1,729.0 1700.0,712.4 1701.0,695.8 1702.0,685.6 1703.0,685.6 1704.0,696.7" stroke="#f00000"/>
<polyline points="1675.4,688.0 1676.3,684.3 1677.3,691.4 1678.3,706.5 1679.3,723.9 1680.3,736.8 1681.3,740.5 1682.3,733.4 1683.3,718.3 1684.2,700.9 1685.2,688.0 1686.2,684.3 1687.2,691.4 1688.2,706.5 1689.2,723.9 1690.2,736.8 1691.2,740.5 1692.1,733.4 1693.1,718.3 1694.1,700.9 1695.1,688.0 1696.1,684.3 1697.1,691.4 1698.1,706.5 1699.1,723.9 1700.0,736.8 1701.0,740.5 1702.0,733.4 1703.0,718.3 1704.0,701.5" stroke="#006a00"/>
<polyline points="1704.0,696.7 1705.0,712.4 1706.0,728.1 1707.0,737.8 1707.9,737.8 1708.9,728.1 1709.9,712.4 1710.9,696.7 1711.9,687.0 1712.9,687.0 1713.9,696.7 1714.9,712.4 1715.8,728.1 1716.8,737.8 1717.8,737.8 1718.8,728.1 1719.8,712.4 1720.8,696.7 1721.8,687.0 1722.8,687.0 1723.7,696.7 1724.7,712.4 1725.7,728.1 1726.7,737.8 1727.7,737.8 1728.7,728.1 1729.7,712.4 1730.7,696.7 1731.6,687.0 1732.6,688.4" stroke="#f00000"/>
<polyline points="1704.0,701.5 1705.0,689.2 1706.0,685.8 1707.0,692.5 1707.9,706.8 1708.9,723.3 1709.9,735.6 1710.9,739.0 1711.9,732.3 1712.9,718.0 1713.9,701.5 1714.9,689.2 1715.8,685.8 1716.8,692.5 1717.8,706.8 1718.8,723.3 1719.8,735.6 1720.8,739.0 1721.8,732.3 1722.8,718.0 1723.7,701.5 1724.7,689.2 1725.7,685.8 1726.7,692.5 1727.7,706.8 1728.7,723.3 1729.7,735.6 1730.7,739.0 1731.6,732.3 1732.6,717.7" stroke="#006a00"/>
<polyline points="1704.0,739.0 1705.0,735.6 1706.0,723.3 1707.0,706.8 1707.9,692.5 1708.9,685.8 1709.9,689.2 1710.9,701.5 1711.9,718.0 1712.9,732.3 1713.9,739.0 1714.9,735.6 1715.8,723.3 1716.8,706.8 1717.8,692.5 1718.8,685.8 1719.8,689.2 1720.8,701.5 1721.8,718.0 1722.8,732.3 1723.7,739.0 1724.7,735.6 1725.7,723.3 1726.7,706.8 1727.7,692.5 1728.7,685.8 1729.7,689.2 1730.7,701.5 1731.6,718.0 1732.6,731.2" stroke="#0000c8"/>
<polyline points="1732.6,717.7 1733.6,702.1 1734.6,690.5 1735.6,687.3 1736.6,693.6 1737.6,707.1 1738.6,722.7 1739.5,734.3 1740.5,737.5 1741.5,731.2 1742.5,717.7 1743.5,702.1 1744.5,690.5 1745.5,687.3 1746.5,693.6 1747.4,707.1 1748.4,722.7 1749.4,734.3 1750.4,737.5 1751.4,731.2 1752.4,717.7 1753.4,702.1 1754.4,690.5 1755.3,687.3 1756.3,693.6 1757.3,707.1 1758.3,722.7 1759.3,734.3 1760.3,736.1" stroke="#006a00"/>
<polyline points="1732.6,731.2 1733.6,737.5 1734.6,734.3 1735.6,722.7 1736.6,707.1 1737.6,693.6 1738.6,687.3 1739.5,690.5 1740.5,702.1 1741.5,717.7 1742.5,731.2 1743.5,737.5 1744.5,734.3 1745.5,722.7 1746.5,707.1 1747.4,693.6 1748.4,687.3 1749.4,690.5 1750.4,702.1 1751.4,717.7 1752.4,731.2 1753.4,737.5 1754.4,734.3 1755.3,722.7 1756.3,707.1 1757.3,693.6 1758.3,687.3 1759.3,690.5 1760.3,702.7" stroke="#0000c8"/>
<polyline points="1732.6,688.4 1733.6,697.6 1734.6,712.4 1735.6,727.2 1736.6,736.4 1737.6,736.4 1738.6,727.2 1739.5,712.4 1740.5,697.6 1741.5,688.4 1742.5,688.4 1743.5,697.6 1744.5,712.4 1745.5,727.2 1746.5,736.4 1747.4,736.4 1748.4,727.2 1749.4,712.4 1750.4,697.6 1751.4,688.4 1752.4,688.4 1753.4,697.6 1754.4,712.4 1755.3,727.2 1756.3,736.4 1757.3,736.4 1758.3,727.2 1759.3,712.4 1760.3,698.4" stroke="#f00000"/>
<polyline points="1760.3,702.7 1761.3,717.3 1762.3,730.1 1763.2,736.1 1764.2,733.0 1765.2,722.1 1766.2,707.5 1767.2,694.7 1768.2,688.7 1769.2,691.8 1770.2,702.7 1771.1,717.3 1772.1,730.1 1773.1,736.1 1774.1,733.0 1775.1,722.1 1776.1,707.5 1777.1,694.7 1778.0,688.7 1779.0,691.8 1780.0,702.7 1781.0,717.3 1782.0,730.1 1783.0,736.1 1784.0,733.0 1785.0,722.1 1785.9,707.5 1786.9,694.7 1787.9,688.7 1788.9,693.1" stroke="#0000c8"/>
<polyline points="1760.3,698.4 1761.3,689.8 1762.3,689.8 1763.2,698.4 1764.2,712.4 1765.2,726.4 1766.2,735.0 1767.2,735.0 1768.2,726.4 1769.2,712.4 1770.2,698.4 1771.1,689.8 1772.1,689.8 1773.1,698.4 1774.1,712.4 1775.1,726.4 1776.1,735.0 1777.1,735.0 1778.0,726.4 1779.0,712.4 1780.0,698.4 1781.0,689.8 1782.0,689.8 1783.0,698.4 1784.0,712.4 1785.0,726.4 1785.9,735.0 1786.9,735.0 1787.9,726.4 1788.9,712.4" stroke="#f00000"/>
<polyline points="1760.3,736.1 1761.3,730.1 1762.3,717.3 1763.2,702.7 1764.2,691.8 1765.2,688.7 1766.2,694.7 1767.2,707.5 1768.2,722.1 1769.2,733.0 1770.2,736.1 1771.1,730.1 1772.1,717.3 1773.1,702.7 1774.1,691.8 1775.1,688.7 1776.1,694.7 1777.1,707.5 1778.0,722.1 1779.0,733.0 1780.0,736.1 1781.0,730.1 1782.0,717.3 1783.0,702.7 1784.0,691.8 1785.0,688.7 1785.9,694.7 1786.9,707.5 1787.9,722.1 1788.9,731.7" stroke="#006a00"/>
<polyline points="1788.9,712.4 1789.9,699.3 1790.9,691.2 1791.9,691.2 1792.9,699.3 1793.8,712.4 1794.8,725.5 1795.8,733.6 1796.8,733.6 1797.8,725.5 1798.8,712.4 1799.8,699.3 1800.8,691.2 1801.7,691.2 1802.7,699.3 1803.7,712.4 1804.7,725.5 1805.7,733.6 1806.7,733.6 1807.7,725.5 1808.7,712.4 1809.6,699.3 1810.6,691.2 1811.6,691.2 1812.6,699.3 1813.6,712.4 1814.6,725.5 1815.6,733.6 1816.6,732.2" stroke="#f00000"/>
<polyline points="1788.9,731.7 1789.9,734.6 1790.9,729.0 1791.9,717.0 1792.9,703.3 1793.8,693.1 1794.8,690.2 1795.8,695.8 1796.8,707.8 1797.8,721.5 1798.8,731.7 1799.8,734.6 1800.8,729.0 1801.7,717.0 1802.7,703.3 1803.7,693.1 1804.7,690.2 1805.7,695.8 1806.7,707.8 1807.7,721.5 1808.7,731.7 1809.6,734.6 1810.6,729.0 1811.6,717.0 1812.6,703.3 1813.6,693.1 1814.6,690.2 1815.6,695.8 1816.6,708.1" stroke="#006a00"/>
<polyline points="1788.9,693.1 1789.9,703.3 1790.9,717.0 1791.9,729.0 1792.9,734.6 1793.8,731.7 1794.8,721.5 1795.8,707.8 1796.8,695.8 1797.8,690.2 1798.8,693.1 1799.8,703.3 1800.8,717.0 1801.7,729.0 1802.7,734.6 1803.7,731.7 1804.7,721.5 1805.7,707.8 1806.7,695.8 1807.7,690.2 1808.7,693.1 1809.6,703.3 1810.6,717.0 1811.6,729.0 1812.6,734.6 1813.6,731.7 1814.6,721.5 1815.6,707.8 1816.6,696.9" stroke="#0000c8"/>
<polyline points="1816.6,708.1 1817.5,720.9 1818.5,730.5 1819.5,733.1 1820.5,727.9 1821.5,716.7 1822.5,703.9 1823.5,694.3 1824.5,691.7 1825.4,696.9 1826.4,708.1 1827.4,720.9 1828.4,730.5 1829.4,733.1 1830.4,727.9 1831.4,716.7 1832.4,703.9 1833.3,694.3 1834.3,691.7 1835.3,696.9 1836.3,708.1 1837.3,720.9 1838.3,730.5 1839.3,733.1 1840.3,727.9 1841.2,716.7 1842.2,703.9 1843.2,694.3 1844.2,691.7 1845.2,698.0" stroke="#006a00"/>
<polyline points="1816.6,696.9 1817.5,691.7 1818.5,694.3 1819.5,703.9 1820.5,716.7 1821.5,727.9 1822.5,733.1 1823.5,730.5 1824.5,720.9 1825.4,708.1 1826.4,696.9 1827.4,691.7 1828.4,694.3 1829.4,703.9 1830.4,716.7 1831.4,727.9 1832.4,733.1 1833.3,730.5 1834.3,720.9 1835.3,708.1 1836.3,696.9 1837.3,691.7 1838.3,694.3 1839.3,703.9 1840.3,716.7 1841.2,727.9 1842.2,733.1 1843.2,730.5 1844.2,720.9 1845.2,708.4" stroke="#0000c8"/>
<polyline points="1816.6,732.2 1817.5,724.7 1818.5,712.4 1819.5,700.1 1820.5,692.6 1821.5,692.6 1822.5,700.1 1823.5,712.4 1824.5,724.7 1825.4,732.2 1826.4,732.2 1827.4,724.7 1828.4,712.4 1829.4,700.1 1830.4,692.6 1831.4,692.6 1832.4,700.1 1833.3,712.4 1834.3,724.7 1835.3,732.2 1836.3,732.2 1837.3,724.7 1838.3,712.4 1839.3,700.1 1840.3,692.6 1841.2,692.6 1842.2,700.1 1843.2,712.4 1844.2,724.7 1845.2,730.8" stroke="#f00000"/>
<polyline points="1845.2,708.4 1846.2,698.0 1847.2,693.1 1848.2,695.6 1849.1,704.5 1850.1,716.4 1851.1,726.8 1852.1,731.7 1853.1,729.2 1854.1,720.3 1855.1,708.4 1856.1,698.0 1857.0,693.1 1858.0,695.6 1859.0,704.5 1860.0,716.4 1861.0,726.8 1862.0,731.7 1863.0,729.2 1864.0,720.3 1864.9,708.4 1865.9,698.0 1866.9,693.1 1867.9,695.6 1868.9,704.5 1869.9,716.4 1870.9,726.8 1871.9,731.7 1872.8,729.2" stroke="#0000c8"/>
<polyline points="1845.2,730.8 1846.2,730.8 1847.2,723.8 1848.2,712.4 1849.1,701.0 1850.1,694.0 1851.1,694.0 1852.1,701.0 1853.1,712.4 1854.1,723.8 1855.1,730.8 1856.1,730.8 1857.0,723.8 1858.0,712.4 1859.0,701.0 1860.0,694.0 1861.0,694.0 1862.0,701.0 1863.0,712.4 1864.0,723.8 1864.9,730.8 1865.9,730.8 1866.9,723.8 1867.9,712.4 1868.9,701.0 1869.9,694.0 1870.9,694.0 1871.9,701.0 1872.8,712.4" stroke="#f00000"/>
<polyline points="1845.2,698.0 1846.2,708.4 1847.2,720.3 1848.2,729.2 1849.1,731.7 1850.1,726.8 1851.1,716.4 1852.1,704.5 1853.1,695.6 1854.1,693.1 1855.1,698.0 1856.1,708.4 1857.0,720.3 1858.0,729.2 1859.0,731.7 1860.0,726.8 1861.0,716.4 1862.0,704.5 1863.0,695.6 1864.0,693.1 1864.9,698.0 1865.9,708.4 1866.9,720.3 1867.9,729.2 1868.9,731.7 1869.9,726.8 1870.9,716.4 1871.9,704.5 1872.8,695.6" stroke="#006a00"/>
</g>
<path d="M1280.400 712.5H1873" stroke="#000" stroke-width="1.200"/>
<path d="M1280.400 599.500V854M1280.400 825H1873" stroke="#000" stroke-width="1.300" fill="none"/>
<path d="M1276 821.5h9M1873 821.5h-5 M1276 803.5h9M1873 803.5h-5 M1276 785.5h9M1873 785.5h-5 M1276 767.5h9M1873 767.5h-5 M1276 748.5h9M1873 748.5h-5 M1276 730.5h9M1873 730.5h-5 M1276 712.5h9M1873 712.5h-5 M1276 694.5h9M1873 694.5h-5 M1276 676.5h9M1873 676.5h-5 M1276 657.5h9M1873 657.5h-5 M1276 639.5h9M1873 639.5h-5 M1276 621.5h9M1873 621.5h-5 M1276 603.5h9M1873 603.5h-5 M1379.5 600v6M1379.5 825v-6 M1477.5 600v6M1477.5 825v-6 M1576.5 600v6M1576.5 825v-6 M1675.5 600v6M1675.5 825v-6 M1774.5 600v6M1774.5 825v-6 M1872.5 600v6M1872.5 825v-6" stroke="#000" stroke-width="1.200" fill="none"/>
<text x="1268.500" y="824.6" font-size="8.500" text-anchor="end">-12</text>
<text x="1268.500" y="806.4" font-size="8.500" text-anchor="end">-10</text>
<text x="1268.500" y="788.2" font-size="8.500" text-anchor="end">-8</text>
<text x="1268.500" y="770.0" font-size="8.500" text-anchor="end">-6</text>
<text x="1268.500" y="751.8" font-size="8.500" text-anchor="end">-4</text>
<text x="1268.500" y="733.6" font-size="8.500" text-anchor="end">-2</text>
<text x="1268.500" y="715.4" font-size="8.500" text-anchor="end">0</text>
<text x="1268.500" y="697.2" font-size="8.500" text-anchor="end">2</text>
<text x="1268.500" y="679.0" font-size="8.500" text-anchor="end">4</text>
<text x="1268.500" y="660.8" font-size="8.500" text-anchor="end">6</text>
<text x="1268.500" y="642.6" font-size="8.500" text-anchor="end">8</text>
<text x="1268.500" y="624.4" font-size="8.500" text-anchor="end">10</text>
<text x="1268.500" y="606.2" font-size="8.500" text-anchor="end">12</text>
<text x="1280.4" y="840" font-size="8.500" text-anchor="middle">0.0</text>
<text x="1379.1" y="840" font-size="8.500" text-anchor="middle">0.2</text>
<text x="1477.9" y="840" font-size="8.500" text-anchor="middle">0.4</text>
<text x="1576.6" y="840" font-size="8.500" text-anchor="middle">0.6</text>
<text x="1675.4" y="840" font-size="8.500" text-anchor="middle">0.8</text>
<text x="1774.1" y="840" font-size="8.500" text-anchor="middle">1.0</text>
<text x="1872.8" y="840" font-size="8.500" text-anchor="middle">1.2</text>
<text transform="translate(1251,712) rotate(-90)" font-size="9.500" letter-spacing="0.7" text-anchor="middle" xml:space="preserve">Current  Group B (A)</text>
<rect x="1285.500" y="574" width="448" height="12.500" fill="#fff" stroke="#000" stroke-width="1.100"/>
<path d="M1288 580.500h25" stroke="#c03030" stroke-width="1"/><rect x="1321" y="577" width="6" height="6" fill="#000"/><text x="1328" y="584" font-size="10.500" letter-spacing="0.1">I L1(1): I L1(1)</text>
<path d="M1437 580.500h25" stroke="#409040" stroke-width="1"/><rect x="1470" y="577" width="6" height="6" fill="#000"/><text x="1477" y="584" font-size="10.500" letter-spacing="0.1">I L2(1): I L2(1)</text>
<path d="M1587.5 580.500h25" stroke="#3030a0" stroke-width="1"/><rect x="1620.5" y="577" width="6" height="6" fill="#000"/><text x="1627.5" y="584" font-size="10.500" letter-spacing="0.1">I L3(1): I L3(1)</text>
<rect x="1280.400" y="885.500" width="593" height="36" fill="#fff"/>
<path d="M1280.400 885.500V950M1280.400 921.500H1873" stroke="#000" stroke-width="1.300" fill="none"/>
<path d="M1379.5 886v6M1379.5 916v10 M1477.5 886v6M1477.5 916v10 M1576.5 886v6M1576.5 916v10 M1675.5 886v6M1675.5 916v10 M1774.5 886v6M1774.5 916v10 M1872.5 886v6M1872.5 916v10" stroke="#000" stroke-width="1.200" fill="none"/>
<path d="M1280.400 897.500H1749M1280.400 909.500H1373" stroke="#000" stroke-width="1"/>
<rect x="1749" y="894.500" width="108" height="6.200" fill="#f6b98c" stroke="#000" stroke-width="1"/>
<rect x="1373.500" y="906.500" width="500" height="6.200" fill="#f6b98c" stroke="#000" stroke-width="1"/>
<rect x="1724" y="891" width="24.500" height="12" fill="#b4f04a"/><text x="1736" y="899.800" font-size="9.500" font-weight="bold" text-anchor="middle">0.95</text>
<rect x="1857.500" y="891" width="28" height="12" fill="#9be0ea"/><text x="1871.500" y="899.800" font-size="9.500" font-weight="bold" text-anchor="middle">1.168</text>
<rect x="1349.500" y="903" width="23" height="12" fill="#b4f04a"/><text x="1361" y="911.800" font-size="9.500" font-weight="bold" text-anchor="middle">0.19</text>
<rect x="1873.500" y="903" width="23" height="12" fill="#ffee20"/><text x="1875" y="911.800" font-size="9.500" font-weight="bold">1.01:</text>
<text x="1278" y="899.800" font-size="9.500" font-weight="bold" text-anchor="end">Trip</text>
<text x="1278" y="911.800" font-size="9.500" font-weight="bold" text-anchor="end">Start</text>
<text x="1280.4" y="936" font-size="8.500" text-anchor="middle">0.0</text>
<text x="1379.1" y="936" font-size="8.500" text-anchor="middle">0.2</text>
<text x="1477.9" y="936" font-size="8.500" text-anchor="middle">0.4</text>
<text x="1576.6" y="936" font-size="8.500" text-anchor="middle">0.6</text>
<text x="1675.4" y="936" font-size="8.500" text-anchor="middle">0.8</text>
<text x="1774.1" y="936" font-size="8.500" text-anchor="middle">1.0</text>
<text x="1872.8" y="936" font-size="8.500" text-anchor="middle">1.2</text>
<path d="M1353 313V568M1353 599.500V854M1353 885.500V950" stroke="#e9bc30" stroke-width="2.300" stroke-opacity=".9"/>
<path d="M1577.3 313V568M1577.3 599.500V854M1577.3 885.500V950" stroke="#1cb4e0" stroke-width="2.300" stroke-opacity=".9"/>
<circle cx="1877.900" cy="977.600" r="17" fill="#4cb840"/><path d="M1868 977.600h20M1878 967.600v20" stroke="#fff" stroke-width="4"/>
<rect x="1280" y="994.500" width="593" height="15.500" fill="#f3f3f3"/><rect x="1297" y="994.500" width="559" height="15.500" fill="#cdcdcd"/><path d="M1290.500 998l-4.500 4 4.500 4M1861.500 998l4.500 4-4.500 4" fill="none" stroke="#505050" stroke-width="1.700"/>
</svg>
<div class="a" style="left:0;top:1043px;width:1917px;height:37px;background:#087cd2"></div>
<div class="sb" style="left:1.0px;width:28px;letter-spacing:-0.4px">IA1</div>
<div class="sb" style="left:28.6px;width:28px;letter-spacing:-0.4px">IA2</div>
<div class="sb" style="left:56.2px;width:28px;letter-spacing:-0.4px">IA3</div>
<div class="sb" style="left:83.8px;width:28px;letter-spacing:-0.4px">IB1</div>
<div class="sb" style="left:111.4px;width:28px;letter-spacing:-0.4px">IB2</div>
<div class="sb" style="left:139.0px;width:28px;letter-spacing:-0.4px">IB3</div>
<div class="a" style="left:169px;top:1046px;width:1px;height:32px;background:#6fb4e6"></div>
<div class="a" style="left:175.5px;top:1046px;width:29px;height:32px;background:#fcfcf6;border:1px solid #d8d8d0"></div>
<div class="t b" style="left:183.0px;top:1049px;font-size:11.500px;letter-spacing:-0.4px">C1</div>
<div class="a" style="left:183.0px;top:1063px;width:13px;height:13px;border:2px solid #333;border-radius:50%"></div>
<div class="a" style="left:205px;top:1046px;width:29px;height:32px;background:#fcfcf6;border:1px solid #d8d8d0"></div>
<div class="t b" style="left:212.5px;top:1049px;font-size:11.500px;letter-spacing:-0.4px">C2</div>
<div class="a" style="left:212.5px;top:1063px;width:13px;height:13px;border:2px solid #333;border-radius:50%"></div>
<div class="a" style="left:1159px;top:1046px;width:2px;height:32px;background:#a4cbf0"></div>
<div class="a" style="left:1294px;top:1046px;width:2px;height:32px;background:#a4cbf0"></div>
<div class="a" style="left:1397px;top:1046px;width:2px;height:32px;background:#a4cbf0"></div>
<div class="a" style="left:1600px;top:1046px;width:2px;height:32px;background:#a4cbf0"></div>
<div class="a" style="left:1736px;top:1046px;width:2px;height:32px;background:#a4cbf0"></div>
<div class="a" style="left:1838px;top:1046px;width:2px;height:32px;background:#a4cbf0"></div>
<div class="st" style="left:1169px;letter-spacing:0">St. Cond.: Immed.</div>
<div class="st" style="left:1301px;letter-spacing:0">CT: Dir. line</div>
<div class="a" style="left:1403px;top:1046px;width:194px;height:31px;background:#e3cb3c;border:1px solid #c0aa28"></div>
<div class="st b" style="left:1415px;top:1056px;font-weight:bold;font-size:12.700px;color:#1a1208;letter-spacing:0">100%</div>
<div class="st b" style="left:1500px;top:1056px;font-weight:bold;font-size:12.700px;color:#1a1208;letter-spacing:0">1.20s/1.20s</div>
<div class="t" style="left:1607px;top:1056.500px;font-size:12px;color:#14246a;letter-spacing:0">Running Room :  None</div>
<svg class="a" style="left:1738px;top:1044px" width="102" height="36" viewBox="1738 1044 102 36">
<path d="M1750 1050l16-2 1 14-15 4z" fill="#3a55a8" stroke="#c8d0e0" stroke-width="1"/><path d="M1741 1072l11-6 16-3-9 11z" fill="#9aa4b8" stroke="#50586a" stroke-width=".8"/>
<path d="M1768 1066q6-12 12-2t10 6 6 6" fill="none" stroke="#1030c0" stroke-width="1.400"/><path d="M1781 1049l9 10M1790 1049l-9 10" stroke="#d83030" stroke-width="2"/>
<path d="M1805 1052l18-4 12 8-18 5z" fill="#f4f4f4" stroke="#222" stroke-width="1"/><path d="M1805 1052l12 9v14l-12-10z" fill="#fff" stroke="#222" stroke-width="1"/><path d="M1817 1061l18-5v13l-18 6z" fill="#dcdcdc" stroke="#222" stroke-width="1"/><path d="M1821 1065l11-3M1821 1069l11-3" stroke="#555" stroke-width="1"/>
</svg>
<div class="a" style="left:1844px;top:1051px;width:21px;height:21px;border-radius:50%;background:#f01414"></div>
<div class="t" style="left:1867px;top:1056px;font-size:12.500px;color:#14246a;letter-spacing:-0.2px">AMT</div>
<div class="dd" style="left:1896px;top:1061px;border-top-color:#14246a"></div>
<div class="a" style="left:1917px;top:23px;width:3px;height:95px;background:#f4f6fb"></div>
<div class="a" style="left:1917px;top:118px;width:3px;height:924px;background:#dfe3f6"></div>
<div class="a" style="left:1917px;top:1042px;width:3px;height:38px;background:#b4e4ff"></div>
</body></html>
